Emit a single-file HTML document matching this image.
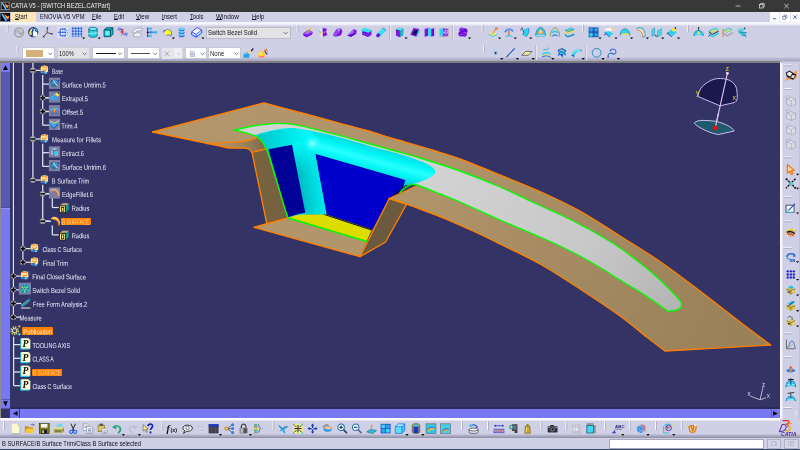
<!DOCTYPE html>
<html><head><meta charset="utf-8"><title>CATIA V5 - [SWITCH BEZEL.CATPart]</title>
<style>
html,body{margin:0;padding:0;}
body{width:800px;height:450px;overflow:hidden;position:relative;background:#cfcfe6;font-family:"Liberation Sans",sans-serif;}
.b{position:absolute;}
.t{position:absolute;white-space:nowrap;line-height:10px;height:10px;transform-origin:0 50%;display:block;}
svg{position:absolute;left:0;top:0;overflow:visible;}
u{text-decoration:underline;text-underline-offset:0px;text-decoration-thickness:0.45px;}
#wrap{position:absolute;left:0;top:0;width:800px;height:450px;will-change:transform;}
</style></head><body><div id="wrap">

<div class="b" style="left:0px;top:0px;width:800px;height:12px;background:#383838;"></div>
<span class="t" style="left:11.3px;top:1.0px;font-size:6.8px;color:#ececec;transform:scaleX(0.846);">CATIA V5 - [SWITCH BEZEL.CATPart]</span>
<div class="b" style="left:0px;top:12px;width:800px;height:10px;background:#cfcfe6;"></div>
<div class="b" style="left:10.7px;top:12.2px;width:25.3px;height:9.6px;background:#ffe6b8;"></div>
<span class="t" style="left:14.6px;top:12.2px;font-size:6.8px;color:#15151f;transform:scaleX(0.857);"><u>S</u>tart</span>
<span class="t" style="left:40.0px;top:12.2px;font-size:6.8px;color:#15151f;transform:scaleX(0.853);">ENOVIA V5 VPM</span>
<span class="t" style="left:91.7px;top:12.2px;font-size:6.8px;color:#15151f;transform:scaleX(0.876);"><u>F</u>ile</span>
<span class="t" style="left:113.6px;top:12.2px;font-size:6.8px;color:#15151f;transform:scaleX(0.853);"><u>E</u>dit</span>
<span class="t" style="left:136.0px;top:12.2px;font-size:6.8px;color:#15151f;transform:scaleX(0.890);"><u>V</u>iew</span>
<span class="t" style="left:162.0px;top:12.2px;font-size:6.8px;color:#15151f;transform:scaleX(0.882);"><u>I</u>nsert</span>
<span class="t" style="left:190.0px;top:12.2px;font-size:6.8px;color:#15151f;transform:scaleX(0.844);"><u>T</u>ools</span>
<span class="t" style="left:216.0px;top:12.2px;font-size:6.8px;color:#15151f;transform:scaleX(0.951);"><u>W</u>indow</span>
<span class="t" style="left:252.0px;top:12.2px;font-size:6.8px;color:#15151f;transform:scaleX(0.887);"><u>H</u>elp</span>
<div class="b" style="left:770.2px;top:12.3px;width:29.8px;height:9.3px;background:#fdfdff;"></div>
<div class="b" style="left:779.3px;top:12.3px;width:0.9px;height:9.3px;background:#e6e6f3;"></div>
<div class="b" style="left:789.8px;top:12.3px;width:0.9px;height:9.3px;background:#e6e6f3;"></div>
<div class="b" style="left:0px;top:22px;width:800px;height:36px;background:#cfcfe6;"></div>
<div class="b" style="left:0px;top:21.6px;width:800px;height:4.4px;background:linear-gradient(#e6e6f3 0%,#f8f8fc 18%,#f6f6fb 50%,#e2e2f1 75%,#d6d6ea 100%);"></div>
<div class="b" style="left:0px;top:57px;width:800px;height:4px;background:linear-gradient(#cbcbe2,#bcbcd4,#aeaec6,#a8a8c0);"></div>
<div class="b" style="left:0px;top:61px;width:779.8px;height:2px;background:#7e7e82;"></div>
<div class="b" style="left:779.8px;top:61px;width:20.2px;height:2px;background:linear-gradient(#b8b8d0,#cfcfe6);"></div>
<div class="b" style="left:0px;top:63px;width:781px;height:355px;background:#333366;"></div>
<div class="b" style="left:0px;top:63px;width:1px;height:355px;background:#8c8c8c;"></div>
<div class="b" style="left:1px;top:63px;width:8.9px;height:346px;background:#5858b4;"></div>
<div class="b" style="left:1px;top:63px;width:8.9px;height:9px;background:#7878f0;"></div>
<div class="b" style="left:1px;top:207px;width:8.9px;height:1px;background:#4a4aa4;"></div>
<div class="b" style="left:1px;top:208px;width:8.9px;height:191.2px;background:#7878f2;"></div>
<div class="b" style="left:1px;top:208px;width:8.9px;height:1.4px;background:#9292f8;"></div>
<div class="b" style="left:1px;top:399.6px;width:8.9px;height:8.9px;background:#7878f0;"></div>
<div class="b" style="left:1px;top:408.5px;width:8.9px;height:9.5px;background:#333366;"></div>
<div class="b" style="left:9.9px;top:408.7px;width:770px;height:9.2px;background:#7878f0;"></div>
<div class="b" style="left:19.4px;top:408.7px;width:0.8px;height:9.2px;background:#3c3c7c;"></div>
<div class="b" style="left:771px;top:408.7px;width:0.7px;height:9.2px;background:#5c5cc0;"></div>
<div class="b" style="left:9.9px;top:407.4px;width:770px;height:1.2px;background:#2b2b5a;"></div>
<div class="b" style="left:779.8px;top:63px;width:20.2px;height:356px;background:#cfcfe6;"></div>
<div class="b" style="left:779.8px;top:63px;width:3.4px;height:356px;background:linear-gradient(90deg,#fafafd 0%,#f6f6fb 60%,#cfcfe6 100%);"></div>
<div class="b" style="left:799px;top:63px;width:1px;height:356px;background:#c0c0d8;"></div>
<div class="b" style="left:0px;top:417.9px;width:779.8px;height:3.2px;background:linear-gradient(#ffffff 0%,#f8f8fc 60%,#dcdcee 100%);"></div>
<div class="b" style="left:0px;top:421px;width:800px;height:13px;background:#cfcfe6;"></div>
<div class="b" style="left:0px;top:433.6px;width:800px;height:4.2px;background:linear-gradient(#c8c8de,#b4b4cc,#a0a0b8,#8c8ca0);"></div>
<div class="b" style="left:0px;top:437.8px;width:800px;height:12.2px;background:#cfcfe6;"></div>
<div class="b" style="left:0px;top:448.8px;width:800px;height:1.2px;background:#2e4e6e;"></div>
<span class="t" style="left:2.0px;top:438.8px;font-size:6.8px;color:#101018;transform:scaleX(0.852);">B SURFACE/B Surface Trim/Class B Surface selected</span>
<div class="b" style="left:608.5px;top:438.7px;width:155.5px;height:10.1px;background:#ffffff;border:0.6px solid #a8a8b8;box-sizing:border-box;"></div>
<div class="b" style="left:767px;top:438.8px;width:14px;height:10px;background:#d6d6ea;border:0.6px solid #b0b0c2;box-sizing:border-box;"></div>
<div class="b" style="left:783.5px;top:438.8px;width:15.5px;height:10px;background:#d6d6ea;border:0.6px solid #b0b0c2;box-sizing:border-box;"></div>
<div class="b" style="left:206px;top:26.8px;width:85.4px;height:12.4px;background:#e3e3e5;border:0.6px solid #bcbcc4;box-sizing:border-box;"></div>
<span class="t" style="left:208.2px;top:28.2px;font-size:6.8px;color:#15151c;transform:scaleX(0.876);">Switch Bezel Solid</span>
<div class="b" style="left:22px;top:47.4px;width:33.4px;height:11.8px;background:#ffffff;border:0.6px solid #c6c6d2;box-sizing:border-box;"></div>
<div class="b" style="left:26px;top:50px;width:17.4px;height:7.4px;background:#d6b27a;"></div>
<div class="b" style="left:57.2px;top:47.4px;width:32.6px;height:11.8px;background:#e3e3e5;border:0.6px solid #cdcdd3;box-sizing:border-box;"></div>
<span class="t" style="left:59.2px;top:48.8px;font-size:6.6px;color:#22222a;transform:scaleX(0.877);">100%</span>
<div class="b" style="left:91.8px;top:47.4px;width:33.4px;height:11.8px;background:#ffffff;border:0.6px solid #c6c6d2;box-sizing:border-box;"></div>
<div class="b" style="left:96px;top:52.7px;width:19.6px;height:1.5px;background:#181818;"></div>
<div class="b" style="left:126.8px;top:47.4px;width:33px;height:11.8px;background:#ffffff;border:0.6px solid #c6c6d2;box-sizing:border-box;"></div>
<div class="b" style="left:130.6px;top:53.4px;width:19.6px;height:0.5px;background:#505050;"></div>
<div class="b" style="left:162px;top:47.4px;width:20.6px;height:11.8px;background:#efeff3;border:0.6px solid #d4d4de;box-sizing:border-box;"></div>
<div class="b" style="left:162.4px;top:47.8px;width:11.6px;height:11px;background:#e6e6ea;"></div>
<div class="b" style="left:185px;top:47.4px;width:22px;height:11.8px;background:#ffffff;border:0.6px solid #c6c6d2;box-sizing:border-box;"></div>
<div class="b" style="left:207.8px;top:47.4px;width:33.4px;height:11.8px;background:#ffffff;border:0.6px solid #c6c6d2;box-sizing:border-box;"></div>
<span class="t" style="left:209.8px;top:48.8px;font-size:6.6px;color:#22222a;transform:scaleX(0.913);">None</span>
<div class="b" style="left:60.8px;top:217.7px;width:30.0px;height:7.7px;background:#ff8000;border-radius:1px;"></div>
<div class="b" style="left:22.1px;top:327.4px;width:31.2px;height:7.7px;background:#ff8000;border-radius:1px;"></div>
<div class="b" style="left:31.8px;top:368.5px;width:30.1px;height:7.7px;background:#ff8000;border-radius:1px;"></div>
<svg width="800" height="450" viewBox="0 0 800 450">
<defs>
<linearGradient id="tanG" gradientUnits="userSpaceOnUse" x1="200" y1="110" x2="720" y2="350"><stop offset="0" stop-color="#b3966c"/><stop offset="0.45" stop-color="#ae9268"/><stop offset="1" stop-color="#9a8159"/></linearGradient>
<linearGradient id="silG" gradientUnits="userSpaceOnUse" x1="420" y1="200" x2="470" y2="150"><stop offset="0" stop-color="#c4c4c4"/><stop offset="0.5" stop-color="#d6d6d6"/><stop offset="1" stop-color="#c0c0c0"/></linearGradient>
<linearGradient id="silG2" gradientUnits="userSpaceOnUse" x1="440" y1="170" x2="680" y2="305"><stop offset="0" stop-color="#d2d2d2"/><stop offset="0.6" stop-color="#c8c8c8"/><stop offset="1" stop-color="#b4b4b4"/></linearGradient>
<linearGradient id="cyV" gradientUnits="userSpaceOnUse" x1="296" y1="180" x2="322" y2="176"><stop offset="0" stop-color="#00b4bc"/><stop offset="0.5" stop-color="#00d4d8"/><stop offset="1" stop-color="#00ecee"/></linearGradient>
<linearGradient id="cyVt" gradientUnits="userSpaceOnUse" x1="300" y1="143" x2="304" y2="172"><stop offset="0" stop-color="#00f6f6" stop-opacity="1"/><stop offset="0.3" stop-color="#00f2f2" stop-opacity="0.8"/><stop offset="1" stop-color="#00e8e8" stop-opacity="0"/></linearGradient>
<linearGradient id="cyL" gradientUnits="userSpaceOnUse" x1="256" y1="140" x2="304" y2="134"><stop offset="0" stop-color="#00c4c8"/><stop offset="0.5" stop-color="#00dcdf"/><stop offset="1" stop-color="#00f6f6"/></linearGradient>
<linearGradient id="cyH" gradientUnits="userSpaceOnUse" x1="372" y1="145" x2="365" y2="171"><stop offset="0" stop-color="#00d8dc"/><stop offset="0.3" stop-color="#00f4f6"/><stop offset="0.55" stop-color="#28ffff"/><stop offset="0.8" stop-color="#00f4f4"/><stop offset="1" stop-color="#00d8dc"/></linearGradient>
<radialGradient id="cyR" gradientUnits="userSpaceOnUse" cx="312.5" cy="143.6" r="9"><stop offset="0" stop-color="#9affff"/><stop offset="0.4" stop-color="#50ffff" stop-opacity="0.7"/><stop offset="1" stop-color="#20ffff" stop-opacity="0"/></radialGradient>
<linearGradient id="filS" gradientUnits="userSpaceOnUse" x1="212" y1="146" x2="262" y2="142"><stop offset="0" stop-color="#9c825a" stop-opacity="0"/><stop offset="0.55" stop-color="#8e7650" stop-opacity="0.5"/><stop offset="1" stop-color="#7c6846" stop-opacity="0.9"/></linearGradient>
</defs>
<path d="M152.5,132 L264,102.8 C270.0,104.4 287.3,109.1 300.0,112.5 C312.7,115.9 328.9,120.3 340.0,123.3 C351.1,126.3 357.0,127.7 366.7,130.5 C376.4,133.3 387.1,136.8 398.0,140.0 C408.9,143.2 421.7,146.8 432.0,150.0 C442.3,153.2 448.7,154.8 460.0,159.0 C471.3,163.2 486.7,169.6 500.0,175.0 C513.3,180.4 526.7,185.5 540.0,191.5 C553.3,197.5 566.7,203.6 580.0,211.0 C593.3,218.4 606.7,227.6 620.0,236.0 C633.3,244.4 646.7,252.3 660.0,261.5 C673.3,270.7 686.7,280.9 700.0,291.0 C713.3,301.1 728.2,313.0 740.0,322.0 C751.8,331.0 765.5,341.2 770.6,345.0 L665,351 C662.2,348.8 655.5,343.8 648.0,338.0 C640.5,332.2 631.3,324.2 620.0,316.0 C608.7,307.8 593.3,297.7 580.0,289.0 C566.7,280.3 553.3,271.5 540.0,264.0 C526.7,256.5 511.2,249.5 500.0,244.0 C488.8,238.5 481.9,235.1 473.0,231.0 C464.1,226.9 455.5,223.0 446.7,219.3 C437.9,215.6 429.6,212.5 420.0,209.0 C410.4,205.5 394.4,200.2 389.3,198.5 L417.3,185.5 L405,180 L300,150 L268,152.7 L265.6,149 L252,152.3 C250.4,149.6 248,148.3 244,148.2 L231,148 C227,148 224,147 220,146 Z" fill="url(#tanG)"/>
<path d="M208,143.7 L238,141.9 C247,141.2 253,139.6 257.6,137.3 L262.7,142 L265.6,149 L252,152.3 C250.4,149.6 248,148.3 244,148.2 L231,148 C227,148 224,147 220,146 Z" fill="url(#filS)"/>
<path d="M252,152.3 L265.6,149 L268,152.7 L285.3,210 L288,218 L266.7,223.3 Z" fill="#76623f"/>
<path d="M253.9,227.3 L288,218 L366.7,241.5 L360,256.7 Z" fill="#b2966b"/>
<path d="M389.3,198.5 L406.7,204 L385.6,242 L360,256.7 Z" fill="#6c5a3e"/>
<path d="M234.7,130 C237.2,129.4 245.1,127.4 250.0,126.5 C254.9,125.6 259.2,125.1 264.0,124.6 C268.8,124.1 273.6,123.4 278.7,123.4 C283.8,123.4 288.9,123.8 294.7,124.7 C300.5,125.6 305.8,127.0 313.3,128.8 C320.9,130.6 330.6,133.1 340.0,135.6 C349.4,138.1 361.1,141.5 370.0,144.0 C378.9,146.5 385.0,148.2 393.3,150.5 C401.6,152.8 408.9,154.6 420.0,158.0 C431.1,161.4 446.7,166.2 460.0,171.0 C473.3,175.8 486.7,181.2 500.0,187.0 C513.3,192.8 530.0,200.9 540.0,205.5 C550.0,210.1 553.3,211.3 560.0,214.5 C566.7,217.7 573.3,221.0 580.0,224.5 C586.7,228.0 593.3,231.6 600.0,235.5 C606.7,239.4 613.3,243.4 620.0,248.0 C626.7,252.6 633.3,257.7 640.0,263.0 C646.7,268.3 654.0,274.5 660.0,280.0 C666.0,285.5 672.4,292.2 676.0,296.0 C679.6,299.8 680.6,301.8 681.5,303.0 C681.3,303.8 681.6,306.8 680.5,308.0 C679.4,309.2 677.1,310.0 675.0,310.5 C672.9,311.0 669.2,311.1 668.0,311.2 C665.3,309.3 656.7,303.2 652.0,300.0 C647.3,296.8 645.3,295.3 640.0,292.0 C634.7,288.7 626.7,284.1 620.0,280.0 C613.3,275.9 606.7,271.5 600.0,267.5 C593.3,263.5 586.7,259.6 580.0,256.0 C573.3,252.4 566.7,249.2 560.0,246.0 C553.3,242.8 550.0,241.3 540.0,237.0 C530.0,232.7 513.3,225.8 500.0,220.0 C486.7,214.2 470.0,206.3 460.0,202.0 C450.0,197.7 446.7,196.7 440.0,194.0 C433.3,191.3 424.5,187.6 420.0,186.0 C415.5,184.4 414.2,184.6 413.0,184.3 L405,184.8 L400,178 L300,140 L254.7,135.6 Z" fill="url(#silG2)"/>
<path d="M254.7,135.6 C256.2,135.0 260.9,133.1 264.0,132.2 C267.1,131.3 269.7,130.8 273.0,130.2 C276.3,129.6 280.4,128.9 284.0,128.6 C287.6,128.3 290.2,127.8 294.7,128.2 C299.1,128.6 304.8,129.7 310.7,130.8 C316.6,131.9 323.4,133.4 330.0,135.0 C336.6,136.6 343.3,138.4 350.0,140.3 C356.7,142.2 362.2,144.0 370.0,146.2 C377.8,148.4 388.7,151.0 396.7,153.3 C404.7,155.6 412.8,158.3 418.0,160.2 C423.2,162.0 425.4,163.0 428.0,164.4 C430.6,165.8 432.4,167.1 433.6,168.4 C434.8,169.7 435.5,170.7 435.3,172.0 C435.1,173.3 434.5,174.6 432.6,176.0 C430.7,177.4 427.1,178.9 424.0,180.2 C420.9,181.5 417.1,183.0 414.0,183.8 C410.9,184.6 406.8,184.8 405.3,185.0 L402.7,187.3 L405.3,179.9 L315.5,154 L326.7,214.5 L322.7,214.8 L304,214.8 L288,218 L285.3,210 L268,152.7 C266,147 262,140 254.7,135.6 Z" fill="url(#cyH)"/>
<path d="M254.7,135.6 C264,132.2 275,129.4 294.7,128.2 L312,131.2 L318,150 L292,144.7 L268,148.7 L268,152.7 C266,147 262,140 254.7,135.6 Z" fill="url(#cyL)"/>
<path d="M291.4,144.9 C296,138 310,136 315.5,154 L326.7,214.5 L322.7,214.8 L310.7,214 L305.3,212.7 Z" fill="url(#cyV)"/>
<path d="M291.4,144.9 C296,138 310,136 315.5,154 L326.7,214.5 L322.7,214.8 L310.7,214 L305.3,212.7 Z" fill="url(#cyVt)"/>
<ellipse cx="312.5" cy="143.6" rx="10" ry="8" fill="url(#cyR)"/>
<path d="M268.3,149.2 L292,144.7 L305.3,212.7 C300,213.5 294,215 288.5,217.3 L285.6,210 Z" fill="#000096"/>
<path d="M315.5,154 L405.3,179.9 L402.7,187.3 L389.3,198.5 L372,229.6 L326.7,214.6 Z" fill="#0000cd"/>
<path d="M405.3,180.5 L402.9,187.5 L392,196.5 L400,192 C401,188 403,185 405.3,180.5 Z" fill="#00002a"/>
<path d="M288.5,217.6 C296,215.2 300,214.6 305,214.6 L322.7,214.6 L326.7,214.8 L372,229.4 L366.7,241 Z" fill="#dcdc00"/>
<path d="M322.7,214.6 L326.7,214.8 L372,229.4 L371.3,230.6 Z" fill="#202000"/>
<path d="M152.5,132 L264,102.8 C270.0,104.4 287.3,109.1 300.0,112.5 C312.7,115.9 328.9,120.3 340.0,123.3 C351.1,126.3 357.0,127.7 366.7,130.5 C376.4,133.3 387.1,136.8 398.0,140.0 C408.9,143.2 421.7,146.8 432.0,150.0 C442.3,153.2 448.7,154.8 460.0,159.0 C471.3,163.2 486.7,169.6 500.0,175.0 C513.3,180.4 526.7,185.5 540.0,191.5 C553.3,197.5 566.7,203.6 580.0,211.0 C593.3,218.4 606.7,227.6 620.0,236.0 C633.3,244.4 646.7,252.3 660.0,261.5 C673.3,270.7 686.7,280.9 700.0,291.0 C713.3,301.1 728.2,313.0 740.0,322.0 C751.8,331.0 765.5,341.2 770.6,345.0 L665,351 C662.2,348.8 655.5,343.8 648.0,338.0 C640.5,332.2 631.3,324.2 620.0,316.0 C608.7,307.8 593.3,297.7 580.0,289.0 C566.7,280.3 553.3,271.5 540.0,264.0 C526.7,256.5 511.2,249.5 500.0,244.0 C488.8,238.5 481.9,235.1 473.0,231.0 C464.1,226.9 455.5,223.0 446.7,219.3 C437.9,215.6 429.6,212.5 420.0,209.0 C410.4,205.5 394.4,200.2 389.3,198.5" fill="none" stroke="#ff8000" stroke-width="1.35" stroke-linejoin="round" stroke-linecap="round"/>
<path d="M389.3,198.5 L417.3,185.5" fill="none" stroke="#ff8000" stroke-width="1.35" stroke-linejoin="round" stroke-linecap="round"/>
<path d="M152.5,132 L220,146 C224,147 227,148 231,148 L244,148.2 C248,148.3 250.4,149.6 252,152.3 L266.7,223.3" fill="none" stroke="#ff8000" stroke-width="1.35" stroke-linejoin="round" stroke-linecap="round"/>
<path d="M252,152.3 L265.6,149" fill="none" stroke="#ff8000" stroke-width="1.35" stroke-linejoin="round" stroke-linecap="round"/>
<path d="M208,143.7 L238,141.9 C247,141.2 253,139.6 257.6,137.3" fill="none" stroke="#ff8000" stroke-width="1.35" stroke-linejoin="round" stroke-linecap="round"/>
<path d="M288,218 L253.9,227.3 L360,256.7 L389.3,198.5" fill="none" stroke="#ff8000" stroke-width="1.35" stroke-linejoin="round" stroke-linecap="round"/>
<path d="M389.3,198.5 L406.7,204 L385.6,242 L360,256.7" fill="none" stroke="#ff8000" stroke-width="1.35" stroke-linejoin="round" stroke-linecap="round"/>
<path d="M234.7,130 C237.2,129.4 245.1,127.4 250.0,126.5 C254.9,125.6 259.2,125.1 264.0,124.6 C268.8,124.1 273.6,123.4 278.7,123.4 C283.8,123.4 288.9,123.8 294.7,124.7 C300.5,125.6 305.8,127.0 313.3,128.8 C320.9,130.6 330.6,133.1 340.0,135.6 C349.4,138.1 361.1,141.5 370.0,144.0 C378.9,146.5 385.0,148.2 393.3,150.5 C401.6,152.8 408.9,154.6 420.0,158.0 C431.1,161.4 446.7,166.2 460.0,171.0 C473.3,175.8 486.7,181.2 500.0,187.0 C513.3,192.8 530.0,200.9 540.0,205.5 C550.0,210.1 553.3,211.3 560.0,214.5 C566.7,217.7 573.3,221.0 580.0,224.5 C586.7,228.0 593.3,231.6 600.0,235.5 C606.7,239.4 613.3,243.4 620.0,248.0 C626.7,252.6 633.3,257.7 640.0,263.0 C646.7,268.3 654.0,274.5 660.0,280.0 C666.0,285.5 672.4,292.2 676.0,296.0 C679.6,299.8 680.6,301.8 681.5,303.0 C681.3,303.8 681.6,306.8 680.5,308.0 C679.4,309.2 677.1,310.0 675.0,310.5 C672.9,311.0 669.2,311.1 668.0,311.2" fill="none" stroke="#00ff00" stroke-width="1.35" stroke-linejoin="round" stroke-linecap="round"/>
<path d="M400,192.5 C404,188 408,185 413,184.3 C414.2,184.6 415.5,184.4 420.0,186.0 C424.5,187.6 433.3,191.3 440.0,194.0 C446.7,196.7 450.0,197.7 460.0,202.0 C470.0,206.3 486.7,214.2 500.0,220.0 C513.3,225.8 530.0,232.7 540.0,237.0 C550.0,241.3 553.3,242.8 560.0,246.0 C566.7,249.2 573.3,252.4 580.0,256.0 C586.7,259.6 593.3,263.5 600.0,267.5 C606.7,271.5 613.3,275.9 620.0,280.0 C626.7,284.1 634.7,288.7 640.0,292.0 C645.3,295.3 647.3,296.8 652.0,300.0 C656.7,303.2 665.3,309.3 668.0,311.2" fill="none" stroke="#00ff00" stroke-width="1.35" stroke-linejoin="round" stroke-linecap="round"/>
<path d="M234.7,130 C236.6,130.5 242.7,132.1 246.0,133.0 C249.3,133.9 252.4,134.6 254.7,135.6 C257.0,136.6 258.4,137.5 260.0,139.0 C261.6,140.5 262.7,142.2 264.0,144.5 C265.3,146.8 267.3,151.3 268.0,152.7 L285.3,210 L288,218 L366.7,241.5" fill="none" stroke="#00ff00" stroke-width="1.35" stroke-linejoin="round" stroke-linecap="round"/>
<path d="M697.8,96.4 C699,90 702,85.6 706.6,83 C710,80.6 713.6,79 717.3,78.6 C722,78.2 726,78.8 729.7,80.4 C733.4,82.4 735.6,85 736.5,88.4 C737.2,91.6 737.4,95 737.2,98.2 C737,100.6 736,102 734.2,102.6 L720,105.8 Z" fill="#191950"/>
<path d="M697.8,96.4 C699,90 702,85.6 706.6,83 C710,80.6 713.6,79 717.3,78.6 C722,78.2 726,78.8 729.7,80.4 C733.4,82.4 735.6,85 736.5,88.4 C737.2,91.6 737.4,95 737.2,98.2 C737,100.6 736,102 734.2,102.6 L720,105.8 Z" fill="none" stroke="#dcc8f4" stroke-width="0.9"/>
<path d="M727.4,73.3 L715.5,126.6" stroke="#dcc8f4" stroke-width="1.1"/>
<circle cx="727.4" cy="73.3" r="1.4" fill="#f0e8ff"/>
<path d="M694.2,123 C696,121 699,120.4 703,120.4 C707,120.4 711,120.6 715.5,121.3 C720,122.2 724.4,123.8 728,125.7 C731,127.4 733.6,129.4 734.2,131 L718.2,134.6 C712,133.4 706,131 701.3,128.4 C698,126.6 695.4,124.8 694.2,123 Z" fill="#1f5a6e"/>
<path d="M694.2,123 C696,121 699,120.4 703,120.4 C707,120.4 711,120.6 715.5,121.3 C720,122.2 724.4,123.8 728,125.7 C731,127.4 733.6,129.4 734.2,131 L718.2,134.6 C712,133.4 706,131 701.3,128.4 C698,126.6 695.4,124.8 694.2,123 Z" fill="none" stroke="#dcc8f4" stroke-width="0.9"/>
<path d="M718.6,112.6 L715.5,126.6" stroke="#dcc8f4" stroke-width="1.1"/>
<rect x="712.9" y="125.7" width="4.2" height="4.4" fill="#e01010"/>
<text x="725.6" y="70.6" font-family="Liberation Sans,sans-serif" font-size="7" fill="#e8d838">z</text>
<text x="696" y="94.6" font-family="Liberation Sans,sans-serif" font-size="7" fill="#e8d838">y</text>
<text x="732.4" y="99.8" font-family="Liberation Sans,sans-serif" font-size="7" fill="#e8d838">x</text>
<path d="M760,399.8 L763,387.2 M760,399.8 L750.6,396.2 M760,399.8 L766,397.8" stroke="#d4d4ec" stroke-width="0.8" fill="none"/>
<text x="762" y="386.6" font-family="Liberation Sans,sans-serif" font-size="6.4" fill="#d4d4ec">z</text>
<text x="747.4" y="396" font-family="Liberation Sans,sans-serif" font-size="6.4" fill="#d4d4ec">x</text>
<text x="766.8" y="398.4" font-family="Liberation Sans,sans-serif" font-size="6.4" fill="#d4d4ec">x</text>
<path d="M12.4,63 L12.4,315.4" stroke="#23235a" stroke-width="0.9" fill="none"/>
<path d="M13.4,63 L13.4,318.4" stroke="#e2e2f6" stroke-width="1.25" fill="none"/>
<path d="M21.9,63 L21.9,260.5" stroke="#23235a" stroke-width="0.9" fill="none"/>
<path d="M22.9,63 L22.9,263.5" stroke="#e2e2f6" stroke-width="1.25" fill="none"/>
<path d="M31.9,63 L31.9,178.3" stroke="#23235a" stroke-width="0.9" fill="none"/>
<path d="M32.9,63 L32.9,181.3" stroke="#e2e2f6" stroke-width="1.25" fill="none"/>
<path d="M32.9,70.4 L40.3,70.4" stroke="#e2e2f6" stroke-width="1.25" fill="none"/>
<path d="M42.7,97.8 L49.7,97.8" stroke="#e2e2f6" stroke-width="1.25" fill="none"/>
<path d="M42.7,111.5 L49.7,111.5" stroke="#e2e2f6" stroke-width="1.25" fill="none"/>
<path d="M32.9,139.0 L40.3,139.0" stroke="#e2e2f6" stroke-width="1.25" fill="none"/>
<path d="M32.9,180.1 L40.3,180.1" stroke="#e2e2f6" stroke-width="1.25" fill="none"/>
<path d="M42.7,193.8 L49.7,193.8" stroke="#e2e2f6" stroke-width="1.25" fill="none"/>
<path d="M42.7,221.2 L51.0,221.2" stroke="#e2e2f6" stroke-width="1.25" fill="none"/>
<path d="M22.9,248.6 L30.4,248.6" stroke="#e2e2f6" stroke-width="1.25" fill="none"/>
<path d="M22.9,262.3 L30.4,262.3" stroke="#e2e2f6" stroke-width="1.25" fill="none"/>
<path d="M13.4,276.1 L20.6,276.1" stroke="#e2e2f6" stroke-width="1.25" fill="none"/>
<path d="M13.4,289.8 L20.6,289.8" stroke="#e2e2f6" stroke-width="1.25" fill="none"/>
<path d="M13.4,303.5 L21.3,303.5" stroke="#e2e2f6" stroke-width="1.25" fill="none"/>
<path d="M13.4,317.2 L20.2,317.2" stroke="#e2e2f6" stroke-width="1.25" fill="none"/>
<path d="M42.7,75.1 L42.7,125.2" stroke="#e2e2f6" stroke-width="1.25" fill="none"/>
<path d="M42.7,84.1 L49.5,84.1" stroke="#e2e2f6" stroke-width="1.25" fill="none"/>
<path d="M42.7,97.8 L49.5,97.8" stroke="#e2e2f6" stroke-width="1.25" fill="none"/>
<path d="M42.7,111.5 L49.5,111.5" stroke="#e2e2f6" stroke-width="1.25" fill="none"/>
<path d="M42.7,125.2 L49.5,125.2" stroke="#e2e2f6" stroke-width="1.25" fill="none"/>
<path d="M42.7,143.7 L42.7,166.4" stroke="#e2e2f6" stroke-width="1.25" fill="none"/>
<path d="M42.7,152.7 L49.5,152.7" stroke="#e2e2f6" stroke-width="1.25" fill="none"/>
<path d="M42.7,166.4 L49.5,166.4" stroke="#e2e2f6" stroke-width="1.25" fill="none"/>
<path d="M42.7,184.8 L42.7,221.2" stroke="#e2e2f6" stroke-width="1.25" fill="none"/>
<path d="M42.7,193.8 L49.5,193.8" stroke="#e2e2f6" stroke-width="1.25" fill="none"/>
<path d="M42.7,221.2 L49.5,221.2" stroke="#e2e2f6" stroke-width="1.25" fill="none"/>
<path d="M52.3,198.0 L52.3,207.5" stroke="#e2e2f6" stroke-width="1.25" fill="none"/>
<path d="M52.3,207.5 L58.8,207.5" stroke="#e2e2f6" stroke-width="1.25" fill="none"/>
<path d="M52.3,225.4 L52.3,234.9" stroke="#e2e2f6" stroke-width="1.25" fill="none"/>
<path d="M52.3,234.9 L58.8,234.9" stroke="#e2e2f6" stroke-width="1.25" fill="none"/>
<path d="M13.6,336.6 L13.6,385.7" stroke="#e2e2f6" stroke-width="1.25" fill="none"/>
<path d="M13.6,344.6 L20.8,344.6" stroke="#e2e2f6" stroke-width="1.25" fill="none"/>
<path d="M13.6,358.3 L20.8,358.3" stroke="#e2e2f6" stroke-width="1.25" fill="none"/>
<path d="M13.6,372.0 L20.8,372.0" stroke="#e2e2f6" stroke-width="1.25" fill="none"/>
<path d="M13.6,385.7 L20.8,385.7" stroke="#e2e2f6" stroke-width="1.25" fill="none"/>
<g transform="translate(39.5,65.0)"><path d="M1.6,1.6 C3.4,0.2 6.6,0.4 8.2,1.2 C8.8,3 8.8,5.6 8.2,7.6 C6.4,8.8 3.4,8.8 1.4,7.8 C0.8,5.8 0.8,3.4 1.6,1.6 Z" fill="#ffe68a"/><path d="M2.4,2 C3.6,1.4 4.6,1.6 5,2.6 M5.6,1.8 C6.6,1.6 7.4,2 7.6,3 M2.8,4.4 C4,5.6 6,5.6 7.2,4.2" fill="none" stroke="#ee5a1c" stroke-width="0.9"/><path d="M1.2,6.6 C3,5.4 5,6.4 6.4,7 C7.6,7.4 8.8,7 9.8,6 C9.4,8 7.8,9.2 5.8,9.2 C4,9.2 2.2,8.4 1.2,6.6 Z" fill="#165fbe"/><path d="M2.4,7.4 C4,6.8 5.6,7.8 7.4,7.8" fill="none" stroke="#38b8f0" stroke-width="0.7"/><path d="M9.4,0.4 C10.8,1.6 11,3.2 10,4.6 C10,3 9.8,1.8 9.4,0.4 Z" fill="#1c6cd0"/><path d="M4.6,7.8 L6.4,8.8 L7.6,7.6" fill="#ffe68a"/></g>
<circle cx="32.9" cy="70.4" r="2.9" fill="#8e8e96"/><circle cx="32.6" cy="70.0" r="2" fill="#bcbcc2"/><rect x="30.599999999999998" y="69.65" width="4.6" height="1.5" fill="#060608"/>
<g transform="translate(48.9,77.7)"><rect x="0" y="0" width="11.2" height="11.2" fill="#7e7ea0"/><path d="M1.6,3.4 C3.6,1 8,1.2 9.8,3.8 C10.2,7 7.4,10 4.2,9.8 C1.8,8.8 1,5.6 1.6,3.4 Z" fill="#4a78a8"/><path d="M2.4,6.6 C3.4,9 6.4,9.6 8.4,8 C7,8.4 4.4,8 3.6,6 Z" fill="#0c7ea0"/><path d="M4.6,2.6 L6.4,5.6 L8.6,8.2" fill="none" stroke="#e8eef8" stroke-width="1"/><path d="M1.6,2 L3,3.6 M8.8,2.4 L9.8,4" stroke="#2038c8" stroke-width="1.2"/><path d="M3.4,5.6 C4.4,4.4 5.4,4.6 5.8,6 M6.8,3.4 C7.6,3.6 8,4.4 7.6,5.2" fill="none" stroke="#30d0f0" stroke-width="0.9"/><path d="M1.2,2.6 L2.6,1.6" stroke="#e8d850" stroke-width="0.7"/></g>
<g transform="translate(48.9,91.4)"><rect x="0" y="0" width="11.2" height="11.2" fill="#7e7ea0"/><path d="M1.4,7.4 L5.6,3.2 L9.4,5.4 L6,9.8 Z" fill="#3aa0f0"/><path d="M5.6,3.2 L8.2,1.4 L10.2,3 L9.4,5.4 Z" fill="#ffe040"/><path d="M1.4,7.4 L5.6,3.2" stroke="#30e0f8" stroke-width="0.9"/><circle cx="9.6" cy="1.6" r="0.7" fill="#202020"/></g>
<circle cx="42.7" cy="97.8" r="2.9" fill="#8e8e96"/><circle cx="42.400000000000006" cy="97.4" r="2" fill="#bcbcc2"/><rect x="40.400000000000006" y="97.07" width="4.6" height="1.5" fill="#060608"/><rect x="41.95" y="95.52" width="1.5" height="4.6" fill="#060608"/>
<g transform="translate(48.9,105.1)"><rect x="0" y="0" width="11.2" height="11.2" fill="#7e7ea0"/><path d="M1.2,4.6 C3.6,1.6 7.6,1.6 10,4.4 L8.8,5.6 C7,3.6 4.2,3.6 2.4,5.6 Z" fill="#36b0f4"/><path d="M1.6,8.8 C4,6.2 7.4,6.2 9.8,8.8 L8.6,10.2 C7,8.4 4.4,8.4 2.8,10.2 Z" fill="#2a7ad8"/><path d="M5.6,3.4 L5.6,8.4" stroke="#ff7020" stroke-width="1.3"/><path d="M4.2,5.4 L5.6,3.2 L7,5.4 Z" fill="#ffb020"/></g>
<circle cx="42.7" cy="111.5" r="2.9" fill="#8e8e96"/><circle cx="42.400000000000006" cy="111.1" r="2" fill="#bcbcc2"/><rect x="40.400000000000006" y="110.78" width="4.6" height="1.5" fill="#060608"/><rect x="41.95" y="109.23" width="1.5" height="4.6" fill="#060608"/>
<g transform="translate(48.9,118.8)"><rect x="0" y="0" width="11.2" height="11.2" fill="#7e7ea0"/><path d="M1,2.2 L6,4.4 L10.2,1.6 L9.6,4.4 L5.4,9.6 L1.6,6.6 Z" fill="#38a8f0"/><path d="M1,2.2 L6,4.4 L10.2,1.6" fill="none" stroke="#ffe060" stroke-width="0.9"/><path d="M2,7 L5.4,9.6 L9,5" fill="none" stroke="#2048b0" stroke-width="0.8"/><circle cx="9.8" cy="9.6" r="0.9" fill="#b0b0b8"/></g>
<g transform="translate(39.5,133.6)"><path d="M1.6,1.6 C3.4,0.2 6.6,0.4 8.2,1.2 C8.8,3 8.8,5.6 8.2,7.6 C6.4,8.8 3.4,8.8 1.4,7.8 C0.8,5.8 0.8,3.4 1.6,1.6 Z" fill="#ffe68a"/><path d="M2.4,2 C3.6,1.4 4.6,1.6 5,2.6 M5.6,1.8 C6.6,1.6 7.4,2 7.6,3 M2.8,4.4 C4,5.6 6,5.6 7.2,4.2" fill="none" stroke="#ee5a1c" stroke-width="0.9"/><path d="M1.2,6.6 C3,5.4 5,6.4 6.4,7 C7.6,7.4 8.8,7 9.8,6 C9.4,8 7.8,9.2 5.8,9.2 C4,9.2 2.2,8.4 1.2,6.6 Z" fill="#165fbe"/><path d="M2.4,7.4 C4,6.8 5.6,7.8 7.4,7.8" fill="none" stroke="#38b8f0" stroke-width="0.7"/><path d="M9.4,0.4 C10.8,1.6 11,3.2 10,4.6 C10,3 9.8,1.8 9.4,0.4 Z" fill="#1c6cd0"/><path d="M4.6,7.8 L6.4,8.8 L7.6,7.6" fill="#ffe68a"/></g>
<circle cx="32.9" cy="139.0" r="2.9" fill="#8e8e96"/><circle cx="32.6" cy="138.6" r="2" fill="#bcbcc2"/><rect x="30.599999999999998" y="138.20" width="4.6" height="1.5" fill="#060608"/>
<g transform="translate(48.9,146.3)"><rect x="0" y="0" width="11.2" height="11.2" fill="#7e7ea0"/><path d="M2,2.6 L6.6,1.4 L9.4,3.6 L9.4,8.6 L5,10 L2,7.6 Z" fill="#a4b2c8"/><path d="M2,2.6 L5,4.8 L5,10 M5,4.8 L9.4,3.6" fill="none" stroke="#18306a" stroke-width="0.7"/><path d="M5.4,5.4 L8.8,4.4 L8.8,8.2 L5.4,9.2 Z" fill="#34d0f0"/><path d="M2.2,1.8 L4.2,3.4" stroke="#30e0f8" stroke-width="1"/></g>
<g transform="translate(48.9,160.0)"><rect x="0" y="0" width="11.2" height="11.2" fill="#7e7ea0"/><path d="M1.6,3.4 C3.6,1 8,1.2 9.8,3.8 C10.2,7 7.4,10 4.2,9.8 C1.8,8.8 1,5.6 1.6,3.4 Z" fill="#4a78a8"/><path d="M2.4,6.6 C3.4,9 6.4,9.6 8.4,8 C7,8.4 4.4,8 3.6,6 Z" fill="#0c7ea0"/><path d="M4.6,2.6 L6.4,5.6 L8.6,8.2" fill="none" stroke="#e8eef8" stroke-width="1"/><path d="M1.6,2 L3,3.6 M8.8,2.4 L9.8,4" stroke="#2038c8" stroke-width="1.2"/><path d="M3.4,5.6 C4.4,4.4 5.4,4.6 5.8,6 M6.8,3.4 C7.6,3.6 8,4.4 7.6,5.2" fill="none" stroke="#30d0f0" stroke-width="0.9"/><path d="M1.2,2.6 L2.6,1.6" stroke="#e8d850" stroke-width="0.7"/></g>
<g transform="translate(39.5,174.7)"><path d="M1.6,1.6 C3.4,0.2 6.6,0.4 8.2,1.2 C8.8,3 8.8,5.6 8.2,7.6 C6.4,8.8 3.4,8.8 1.4,7.8 C0.8,5.8 0.8,3.4 1.6,1.6 Z" fill="#ffe68a"/><path d="M2.4,2 C3.6,1.4 4.6,1.6 5,2.6 M5.6,1.8 C6.6,1.6 7.4,2 7.6,3 M2.8,4.4 C4,5.6 6,5.6 7.2,4.2" fill="none" stroke="#ee5a1c" stroke-width="0.9"/><path d="M1.2,6.6 C3,5.4 5,6.4 6.4,7 C7.6,7.4 8.8,7 9.8,6 C9.4,8 7.8,9.2 5.8,9.2 C4,9.2 2.2,8.4 1.2,6.6 Z" fill="#165fbe"/><path d="M2.4,7.4 C4,6.8 5.6,7.8 7.4,7.8" fill="none" stroke="#38b8f0" stroke-width="0.7"/><path d="M9.4,0.4 C10.8,1.6 11,3.2 10,4.6 C10,3 9.8,1.8 9.4,0.4 Z" fill="#1c6cd0"/><path d="M4.6,7.8 L6.4,8.8 L7.6,7.6" fill="#ffe68a"/></g>
<circle cx="32.9" cy="180.1" r="2.9" fill="#8e8e96"/><circle cx="32.6" cy="179.7" r="2" fill="#bcbcc2"/><rect x="30.599999999999998" y="179.33" width="4.6" height="1.5" fill="#060608"/>
<g transform="translate(48.9,187.4)"><rect x="0" y="0" width="11.2" height="11.2" fill="#7e7ea0"/><path d="M1.4,2.6 L5.6,1.6 C8.6,2 10,4.4 9.8,8.6 L8.4,9.6 C8.4,6 7.4,3.8 4.6,3.6 L1.8,4 Z" fill="#c9a27a"/><path d="M4.6,3.6 C7.4,3.8 8.4,6 8.4,9.6" fill="none" stroke="#e84820" stroke-width="0.9"/><path d="M1.4,2.6 L5.6,1.6 C8.6,2 10,4.4 9.8,8.6" fill="none" stroke="#e8d8c0" stroke-width="0.6"/></g>
<circle cx="42.7" cy="193.8" r="2.9" fill="#8e8e96"/><circle cx="42.400000000000006" cy="193.4" r="2" fill="#bcbcc2"/><rect x="40.400000000000006" y="193.04" width="4.6" height="1.5" fill="#060608"/>
<g transform="translate(58.2,202.3)"><path d="M1.2,3.6 L4.4,1 L10.4,1 L10.4,7.4 L7.4,10.4 L1.2,10.4 Z" fill="#1e9a94"/><path d="M1.2,3.6 L4.4,1 L10.4,1 L7.4,3.6 Z" fill="#c8a074"/><rect x="1.2" y="3.6" width="6.2" height="6.8" fill="#fff088"/><rect x="1.2" y="3.6" width="6.2" height="6.8" fill="none" stroke="#1a1a10" stroke-width="0.9"/><rect x="3.2" y="5.2" width="2.4" height="3.8" fill="none" stroke="#1a1a10" stroke-width="0.8"/><path d="M4.4,7 L4.4,7.2" stroke="#1a1a10" stroke-width="0.8"/></g>
<g transform="translate(50.2,215.8)"><path d="M0.6,2.6 C3.4,-0.4 8.4,1 9.6,5.4 C10.2,7.6 9.4,9.4 8.4,10 C8.6,6.6 7,4 3.6,3.6 C2.4,3.5 1.4,3.4 0.6,2.6 Z" fill="#ffb43c"/><path d="M1.4,2.4 C4,0.8 7.6,1.8 8.8,5 C8,3.4 5.6,2.2 3.4,2.6 Z" fill="#ffe9a0"/><path d="M8.4,10 C8.6,6.6 7,4 3.6,3.6" fill="none" stroke="#e86a10" stroke-width="0.7"/></g>
<circle cx="42.7" cy="221.2" r="2.9" fill="#8e8e96"/><circle cx="42.400000000000006" cy="220.8" r="2" fill="#bcbcc2"/><rect x="40.400000000000006" y="220.46" width="4.6" height="1.5" fill="#060608"/>
<g transform="translate(58.2,229.7)"><path d="M1.2,3.6 L4.4,1 L10.4,1 L10.4,7.4 L7.4,10.4 L1.2,10.4 Z" fill="#1e9a94"/><path d="M1.2,3.6 L4.4,1 L10.4,1 L7.4,3.6 Z" fill="#c8a074"/><rect x="1.2" y="3.6" width="6.2" height="6.8" fill="#fff088"/><rect x="1.2" y="3.6" width="6.2" height="6.8" fill="none" stroke="#1a1a10" stroke-width="0.9"/><rect x="3.2" y="5.2" width="2.4" height="3.8" fill="none" stroke="#1a1a10" stroke-width="0.8"/><path d="M4.4,7 L4.4,7.2" stroke="#1a1a10" stroke-width="0.8"/></g>
<g transform="translate(29.6,243.2)"><path d="M1.6,1.6 C3.4,0.2 6.6,0.4 8.2,1.2 C8.8,3 8.8,5.6 8.2,7.6 C6.4,8.8 3.4,8.8 1.4,7.8 C0.8,5.8 0.8,3.4 1.6,1.6 Z" fill="#ffe68a"/><path d="M2.4,2 C3.6,1.4 4.6,1.6 5,2.6 M5.6,1.8 C6.6,1.6 7.4,2 7.6,3 M2.8,4.4 C4,5.6 6,5.6 7.2,4.2" fill="none" stroke="#ee5a1c" stroke-width="0.9"/><path d="M1.2,6.6 C3,5.4 5,6.4 6.4,7 C7.6,7.4 8.8,7 9.8,6 C9.4,8 7.8,9.2 5.8,9.2 C4,9.2 2.2,8.4 1.2,6.6 Z" fill="#165fbe"/><path d="M2.4,7.4 C4,6.8 5.6,7.8 7.4,7.8" fill="none" stroke="#38b8f0" stroke-width="0.7"/><path d="M9.4,0.4 C10.8,1.6 11,3.2 10,4.6 C10,3 9.8,1.8 9.4,0.4 Z" fill="#1c6cd0"/><path d="M4.6,7.8 L6.4,8.8 L7.6,7.6" fill="#ffe68a"/></g>
<circle cx="22.9" cy="248.6" r="2.9" fill="#8e8e96"/><circle cx="22.599999999999998" cy="248.2" r="2" fill="#bcbcc2"/><rect x="20.599999999999998" y="247.88" width="4.6" height="1.5" fill="#060608"/><rect x="22.15" y="246.33" width="1.5" height="4.6" fill="#060608"/>
<g transform="translate(29.6,256.9)"><path d="M1.6,1.6 C3.4,0.2 6.6,0.4 8.2,1.2 C8.8,3 8.8,5.6 8.2,7.6 C6.4,8.8 3.4,8.8 1.4,7.8 C0.8,5.8 0.8,3.4 1.6,1.6 Z" fill="#ffe68a"/><path d="M2.4,2 C3.6,1.4 4.6,1.6 5,2.6 M5.6,1.8 C6.6,1.6 7.4,2 7.6,3 M2.8,4.4 C4,5.6 6,5.6 7.2,4.2" fill="none" stroke="#ee5a1c" stroke-width="0.9"/><path d="M1.2,6.6 C3,5.4 5,6.4 6.4,7 C7.6,7.4 8.8,7 9.8,6 C9.4,8 7.8,9.2 5.8,9.2 C4,9.2 2.2,8.4 1.2,6.6 Z" fill="#165fbe"/><path d="M2.4,7.4 C4,6.8 5.6,7.8 7.4,7.8" fill="none" stroke="#38b8f0" stroke-width="0.7"/><path d="M9.4,0.4 C10.8,1.6 11,3.2 10,4.6 C10,3 9.8,1.8 9.4,0.4 Z" fill="#1c6cd0"/><path d="M4.6,7.8 L6.4,8.8 L7.6,7.6" fill="#ffe68a"/></g>
<circle cx="22.9" cy="262.3" r="2.9" fill="#8e8e96"/><circle cx="22.599999999999998" cy="261.9" r="2" fill="#bcbcc2"/><rect x="20.599999999999998" y="261.59" width="4.6" height="1.5" fill="#060608"/><rect x="22.15" y="260.04" width="1.5" height="4.6" fill="#060608"/>
<g transform="translate(19.8,270.6)"><path d="M1.6,1.6 C3.4,0.2 6.6,0.4 8.2,1.2 C8.8,3 8.8,5.6 8.2,7.6 C6.4,8.8 3.4,8.8 1.4,7.8 C0.8,5.8 0.8,3.4 1.6,1.6 Z" fill="#ffe68a"/><path d="M2.4,2 C3.6,1.4 4.6,1.6 5,2.6 M5.6,1.8 C6.6,1.6 7.4,2 7.6,3 M2.8,4.4 C4,5.6 6,5.6 7.2,4.2" fill="none" stroke="#ee5a1c" stroke-width="0.9"/><path d="M1.2,6.6 C3,5.4 5,6.4 6.4,7 C7.6,7.4 8.8,7 9.8,6 C9.4,8 7.8,9.2 5.8,9.2 C4,9.2 2.2,8.4 1.2,6.6 Z" fill="#165fbe"/><path d="M2.4,7.4 C4,6.8 5.6,7.8 7.4,7.8" fill="none" stroke="#38b8f0" stroke-width="0.7"/><path d="M9.4,0.4 C10.8,1.6 11,3.2 10,4.6 C10,3 9.8,1.8 9.4,0.4 Z" fill="#1c6cd0"/><path d="M4.6,7.8 L6.4,8.8 L7.6,7.6" fill="#ffe68a"/></g>
<circle cx="13.4" cy="276.1" r="2.9" fill="#8e8e96"/><circle cx="13.1" cy="275.7" r="2" fill="#bcbcc2"/><rect x="11.100000000000001" y="275.30" width="4.6" height="1.5" fill="#060608"/><rect x="12.65" y="273.75" width="1.5" height="4.6" fill="#060608"/>
<g transform="translate(18.8,282.7)"><rect x="0" y="0" width="12.2" height="11.8" fill="#7880a6"/><path d="M2,3.4 L6,1 L10.2,3.4 L10.2,8.2 L6,10.8 L2,8.2 Z" fill="#1a8ea4"/><path d="M2,3.4 L6,5.8 L10.2,3.4 M6,5.8 L6,10.8 M2,8.2 L6,5.8 L10.2,8.2 M6,1 L6,5.8" fill="none" stroke="#30d8e8" stroke-width="0.8"/><circle cx="6" cy="5.8" r="1.5" fill="#c8c040"/><circle cx="6" cy="5.8" r="0.7" fill="#205060"/><circle cx="3.6" cy="4.4" r="0.7" fill="#e8e060"/><circle cx="8.6" cy="4.4" r="0.7" fill="#e8e060"/><circle cx="6" cy="8.8" r="0.7" fill="#e8e060"/></g>
<circle cx="13.4" cy="289.8" r="2.9" fill="#8e8e96"/><circle cx="13.1" cy="289.4" r="2" fill="#bcbcc2"/><rect x="11.100000000000001" y="289.01" width="4.6" height="1.5" fill="#060608"/><rect x="12.65" y="287.46" width="1.5" height="4.6" fill="#060608"/>
<g transform="translate(20.5,297.1)"><path d="M0.6,10 L9.6,10 L10.4,11.8 L0.2,11.8 Z" fill="#8a8aa0"/><path d="M1.2,10.9 L9.6,10.9" stroke="#c0c0d0" stroke-width="0.6" stroke-dasharray="0.8 0.8"/><path d="M0.4,8.6 L8,2.4 L9.6,4.2 L2.2,10 Z" fill="#1e9aa0"/><path d="M0.4,8.6 L8,2.4" stroke="#50e0e8" stroke-width="0.8"/><path d="M4.4,6 L5.6,8 M6.2,4.6 L7.4,6.6" stroke="#e84820" stroke-width="1"/><path d="M8,2.4 L9.2,0.8 L10.2,2.2 L9.6,4.2" fill="#1878c0"/></g>
<circle cx="13.4" cy="303.5" r="2.9" fill="#8e8e96"/><circle cx="13.1" cy="303.1" r="2" fill="#bcbcc2"/><rect x="11.100000000000001" y="302.72" width="4.6" height="1.5" fill="#060608"/><rect x="12.65" y="301.17" width="1.5" height="4.6" fill="#060608"/>
<circle cx="13.4" cy="317.2" r="2.9" fill="#8e8e96"/><circle cx="13.1" cy="316.8" r="2" fill="#bcbcc2"/><rect x="11.100000000000001" y="316.43" width="4.6" height="1.5" fill="#060608"/><rect x="12.65" y="314.88" width="1.5" height="4.6" fill="#060608"/>
<g transform="translate(10.3,325.5)"><circle cx="4.4" cy="5.2" r="3.6" fill="none" stroke="#c4c868" stroke-width="1.6" stroke-dasharray="1.5 0.9"/><circle cx="4.4" cy="5.2" r="2.7" fill="#d8dc9c"/><circle cx="4.4" cy="5.2" r="1.6" fill="#404084"/><path d="M6.6,3 L8.6,1.2 M6.8,7.4 L8.8,8.6" stroke="#101018" stroke-width="0.8"/><circle cx="9" cy="0.9" r="1.1" fill="#f0b080"/><circle cx="9" cy="8.8" r="1.2" fill="#30d0f0"/></g>
<g transform="translate(20.3,338.2)"><rect x="0" y="0.4" width="9.4" height="11" fill="#26c6d6"/><path d="M1,0 L8,0 L10,2 L10,10.2 L1,10.2 Z" fill="#fdfbd4"/><path d="M8,0 L8,2 L10,2" fill="none" stroke="#b8b690" stroke-width="0.5"/><text x="2.1" y="8.7" font-family="Liberation Serif,serif" font-style="italic" font-weight="bold" font-size="9.6" fill="#0c0c0c">P</text></g>
<g transform="translate(20.3,351.9)"><rect x="0" y="0.4" width="9.4" height="11" fill="#26c6d6"/><path d="M1,0 L8,0 L10,2 L10,10.2 L1,10.2 Z" fill="#fdfbd4"/><path d="M8,0 L8,2 L10,2" fill="none" stroke="#b8b690" stroke-width="0.5"/><text x="2.1" y="8.7" font-family="Liberation Serif,serif" font-style="italic" font-weight="bold" font-size="9.6" fill="#0c0c0c">P</text></g>
<g transform="translate(20.3,365.6)"><rect x="0" y="0.4" width="9.4" height="11" fill="#26c6d6"/><path d="M1,0 L8,0 L10,2 L10,10.2 L1,10.2 Z" fill="#fdfbd4"/><path d="M8,0 L8,2 L10,2" fill="none" stroke="#b8b690" stroke-width="0.5"/><text x="2.1" y="8.7" font-family="Liberation Serif,serif" font-style="italic" font-weight="bold" font-size="9.6" fill="#0c0c0c">P</text></g>
<g transform="translate(20.3,379.3)"><rect x="0" y="0.4" width="9.4" height="11" fill="#26c6d6"/><path d="M1,0 L8,0 L10,2 L10,10.2 L1,10.2 Z" fill="#fdfbd4"/><path d="M8,0 L8,2 L10,2" fill="none" stroke="#b8b690" stroke-width="0.5"/><text x="2.1" y="8.7" font-family="Liberation Serif,serif" font-style="italic" font-weight="bold" font-size="9.6" fill="#0c0c0c">P</text></g>
<text transform="translate(52.1,73.70) scale(0.665,1) rotate(0.03)" font-family="Liberation Sans,sans-serif" font-size="7.2" fill="#eeeefc">Base</text>
<text transform="translate(61.9,87.41) scale(0.814,1) rotate(0.03)" font-family="Liberation Sans,sans-serif" font-size="7.2" fill="#eeeefc">Surface Untrim.5</text>
<text transform="translate(61.9,101.12) scale(0.809,1) rotate(0.03)" font-family="Liberation Sans,sans-serif" font-size="7.2" fill="#eeeefc">Extrapol.5</text>
<text transform="translate(61.9,114.83) scale(0.846,1) rotate(0.03)" font-family="Liberation Sans,sans-serif" font-size="7.2" fill="#eeeefc">Offset.5</text>
<text transform="translate(61.3,128.54) scale(0.806,1) rotate(0.03)" font-family="Liberation Sans,sans-serif" font-size="7.2" fill="#eeeefc">Trim.4</text>
<text transform="translate(52.1,142.25) scale(0.827,1) rotate(0.03)" font-family="Liberation Sans,sans-serif" font-size="7.2" fill="#eeeefc">Measure for Fillets</text>
<text transform="translate(61.9,155.96) scale(0.775,1) rotate(0.03)" font-family="Liberation Sans,sans-serif" font-size="7.2" fill="#eeeefc">Extract.6</text>
<text transform="translate(61.9,169.67) scale(0.819,1) rotate(0.03)" font-family="Liberation Sans,sans-serif" font-size="7.2" fill="#eeeefc">Surface Untrim.6</text>
<text transform="translate(51.8,183.38) scale(0.787,1) rotate(0.03)" font-family="Liberation Sans,sans-serif" font-size="7.2" fill="#eeeefc">B Surface Trim</text>
<text transform="translate(61.9,197.09) scale(0.819,1) rotate(0.03)" font-family="Liberation Sans,sans-serif" font-size="7.2" fill="#eeeefc">EdgeFillet.6</text>
<text transform="translate(71.7,210.80) scale(0.787,1) rotate(0.03)" font-family="Liberation Sans,sans-serif" font-size="7.2" fill="#eeeefc">Radius</text>
<text transform="translate(62.0,224.51) scale(0.677,1) rotate(0.03)" font-family="Liberation Sans,sans-serif" font-size="7.2" fill="#ffcf9c">B SURFACE</text>
<text transform="translate(71.7,238.22) scale(0.787,1) rotate(0.03)" font-family="Liberation Sans,sans-serif" font-size="7.2" fill="#eeeefc">Radius</text>
<text transform="translate(42.4,251.93) scale(0.762,1) rotate(0.03)" font-family="Liberation Sans,sans-serif" font-size="7.2" fill="#eeeefc">Class C Surface</text>
<text transform="translate(42.4,265.64) scale(0.815,1) rotate(0.03)" font-family="Liberation Sans,sans-serif" font-size="7.2" fill="#eeeefc">Final Trim</text>
<text transform="translate(32.3,279.35) scale(0.805,1) rotate(0.03)" font-family="Liberation Sans,sans-serif" font-size="7.2" fill="#eeeefc">Final Closed Surface</text>
<text transform="translate(32.3,293.06) scale(0.807,1) rotate(0.03)" font-family="Liberation Sans,sans-serif" font-size="7.2" fill="#eeeefc">Switch Bezel Solid</text>
<text transform="translate(33.0,306.77) scale(0.798,1) rotate(0.03)" font-family="Liberation Sans,sans-serif" font-size="7.2" fill="#eeeefc">Free Form Analysis.2</text>
<text transform="translate(19.4,320.48) scale(0.801,1) rotate(0.03)" font-family="Liberation Sans,sans-serif" font-size="7.2" fill="#eeeefc">Measure</text>
<text transform="translate(23.3,334.19) scale(0.819,1) rotate(0.03)" font-family="Liberation Sans,sans-serif" font-size="7.2" fill="#fff0e0">Publication</text>
<text transform="translate(32.4,347.90) scale(0.753,1) rotate(0.03)" font-family="Liberation Sans,sans-serif" font-size="7.2" fill="#eeeefc">TOOLING AXIS</text>
<text transform="translate(32.4,361.61) scale(0.707,1) rotate(0.03)" font-family="Liberation Sans,sans-serif" font-size="7.2" fill="#eeeefc">CLASS A</text>
<text transform="translate(33.0,375.32) scale(0.680,1) rotate(0.03)" font-family="Liberation Sans,sans-serif" font-size="7.2" fill="#ffcf9c">B SURFACE</text>
<text transform="translate(32.4,389.03) scale(0.762,1) rotate(0.03)" font-family="Liberation Sans,sans-serif" font-size="7.2" fill="#eeeefc">Class C Surface</text>
<g transform="translate(13.3,26.6) scale(0.95)"><circle cx="6" cy="6.2" r="5" fill="none" stroke="#a6a6b0" stroke-width="2"/><path d="M2.2,7.2 C3,3.4 6,3.6 6.2,6 C6.4,8.6 9.2,8.6 10,5.2" fill="none" stroke="#a6a6b0" stroke-width="1.9"/><circle cx="6" cy="6.2" r="6.1" fill="none" stroke="#e4e4ee" stroke-width="0.6"/><path d="M2.6,6.6 C3.4,4.2 5.6,4.4 5.8,6.2" fill="none" stroke="#d8d8e2" stroke-width="0.6"/></g>
<g transform="translate(27.9,26.6) scale(0.95)"><circle cx="5.6" cy="5.8" r="5.4" fill="#1c3c8c"/><path d="M1.6,8.6 C0.8,5 3,2 5.6,1.6 C3.8,3.4 3.4,6 4.2,8.8 Z" fill="#ffe870"/><path d="M6.6,1.4 C8.6,1.8 10,3.2 10.4,5 L8.6,4.4 Z" fill="#38c8f0"/><path d="M5.2,5.2 L5.2,10.6 L9.2,10.6 C10.2,9 10.2,7 9.4,5.6 L8.2,5 L7.4,4.8 L7,2.6 L5.9,2.6 L5.9,5.2 Z" fill="#fbfbfb"/><path d="M5.2,5.2 L5.2,10.6 L9.2,10.6" fill="none" stroke="#404048" stroke-width="0.4"/></g>
<g transform="translate(41.9,26.6) scale(0.95)"><path d="M5.4,6.4 L5.8,1.6 M5.4,6.4 L1.8,10.6 M5.4,6.4 L10.4,7.6" stroke="#5c4a3a" stroke-width="1" fill="none"/><circle cx="5.8" cy="1.4" r="0.9" fill="#2840a0"/><circle cx="1.8" cy="10.6" r="0.9" fill="#2840a0"/><circle cx="10.6" cy="7.6" r="0.9" fill="#2840a0"/></g>
<g transform="translate(56.9,26.6) scale(0.95)"><rect x="0.2" y="0.6" width="11.6" height="11" fill="#e2e2f2"/><path d="M0.8,6 L3.4,6 M3.4,2.6 L3.4,9.6 M3.4,2.6 L6,2.6 M3.4,6 L6,6 M3.4,9.6 L6,9.6 M7.6,1.6 L7.6,3.6 M7.6,5 L7.6,7 M7.6,8.6 L7.6,10.6" stroke="#2a5ee8" stroke-width="1.1" fill="none"/><path d="M5.4,2.6 L10.8,2.6 M5.4,6 L11.2,6 M5.4,9.6 L10.8,9.6" stroke="#2a5ee8" stroke-width="1.3" stroke-dasharray="1.6 1"/><path d="M8.6,4.2 L11,4.2 M8.6,7.8 L11,7.8" stroke="#20c0f0" stroke-width="1"/></g>
<g transform="translate(71.3,26.6) scale(0.95)"><path d="M1.6,0.8 L1.6,10.8 M4.6,0.8 L4.6,10.8 M7.6,0.8 L7.6,10.8 M10.6,0.8 L10.6,10.8 M0.4,1.8 L11.6,1.8 M0.4,4.8 L11.6,4.8 M0.4,7.8 L11.6,7.8" stroke="#3c7cf0" stroke-width="1" fill="none"/><path d="M0.4,10.4 L11.6,10.4" stroke="#3c7cf0" stroke-width="0.9" stroke-dasharray="1 1"/><circle cx="1.6" cy="1.8" r="0.8" fill="#2a60e0"/><circle cx="1.6" cy="4.8" r="0.8" fill="#2a60e0"/><circle cx="1.6" cy="7.8" r="0.8" fill="#2a60e0"/><circle cx="4.6" cy="1.8" r="0.8" fill="#2a60e0"/><circle cx="4.6" cy="4.8" r="0.8" fill="#2a60e0"/><circle cx="4.6" cy="7.8" r="0.8" fill="#2a60e0"/><circle cx="7.6" cy="1.8" r="0.8" fill="#2a60e0"/><circle cx="7.6" cy="4.8" r="0.8" fill="#2a60e0"/><circle cx="7.6" cy="7.8" r="0.8" fill="#2a60e0"/><circle cx="10.6" cy="1.8" r="0.8" fill="#2a60e0"/><circle cx="10.6" cy="4.8" r="0.8" fill="#2a60e0"/><circle cx="10.6" cy="7.8" r="0.8" fill="#2a60e0"/></g>
<g transform="translate(87.3,26.6) scale(0.95)"><path d="M1.6,2.4 C1.6,0.2 10.4,0.2 10.4,2.4 L10.4,9.6 C10.4,11.8 1.6,11.8 1.6,9.6 Z" fill="#28d4e4"/><ellipse cx="6" cy="2.4" rx="4.4" ry="1.6" fill="#7af0f8"/><path d="M1.6,2.4 C1.6,0.2 10.4,0.2 10.4,2.4 L10.4,9.6 C10.4,11.8 1.6,11.8 1.6,9.6 Z M1.6,2.4 C1.6,4.6 10.4,4.6 10.4,2.4" fill="none" stroke="#0c5a68" stroke-width="0.8"/><path d="M0.6,7.6 L11.4,6.6" stroke="#a8f4f8" stroke-width="0.9"/></g>
<g transform="translate(102.7,26.6) scale(0.95)"><path d="M1.4,3.4 L4,1.2 L10.8,1.2 L10.8,8 L8.2,10.6 L1.4,10.6 Z" fill="#18b8c8"/><rect x="2.8" y="4.6" width="4.4" height="4.6" fill="#68f0f8"/><path d="M1.4,3.4 L4,1.2 L10.8,1.2 L10.8,8 L8.2,10.6 L1.4,10.6 Z M1.4,3.4 L8.2,3.4 L8.2,10.6 M8.2,3.4 L10.8,1.2" fill="none" stroke="#0a4c5c" stroke-width="0.9"/></g>
<g transform="translate(116.7,26.6) scale(0.95)"><circle cx="2.6" cy="2.6" r="1.3" fill="none" stroke="#2858e0" stroke-width="0.8"/><path d="M3.6,2.6 L6,2.6" stroke="#2858e0" stroke-width="0.8"/><circle cx="9.8" cy="8" r="1.3" fill="none" stroke="#2858e0" stroke-width="0.8"/><path d="M6.6,8 L8.6,8" stroke="#2858e0" stroke-width="0.8"/><path d="M5.6,2.4 L3.6,6.4 L6,6 L4.4,10.4 L8,5 L5.6,5.4 L7.4,2.4 Z" fill="#e0182c"/></g>
<g transform="translate(131.7,26.6) scale(0.95)"><path d="M0.6,6 C2,2.2 7.6,0.8 11.4,2 L9.6,4.6 C7.4,3.8 4.6,4.6 3.2,6.8 Z" fill="#f6f6fa"/><path d="M1.6,8.6 C3.4,6.4 6.4,6 8.8,6.8 L11,8.8 C9.4,11 4.4,11.4 2.2,10.4 Z" fill="#efeff4"/><path d="M0.6,6 C2,2.2 7.6,0.8 11.4,2 L9.6,4.6 M1.6,8.6 C3.4,6.4 6.4,6 8.8,6.8 L11,8.8 M2.2,10.4 C4.4,11.4 9.4,11 11,8.8 M3.2,6.8 C4.6,4.6 7.4,3.8 9.6,4.6 M0.6,6 L3.2,6.8 M1.6,8.6 L2.2,10.4" fill="none" stroke="#9898a4" stroke-width="0.75"/></g>
<g transform="translate(146.3,26.6) scale(0.95)"><path d="M1.4,1 L1.4,11" stroke="#2a4ee8" stroke-width="1.2"/><path d="M1.4,2.2 L5,2.2 M1.4,6 L4,6 M1.4,9.8 L5,9.8 M6.4,6 L8,6" stroke="#2a4ee8" stroke-width="1"/><rect x="2.6" y="1" width="3.4" height="2.4" fill="#30d0f0"/><rect x="2.6" y="8.6" width="3.4" height="2.4" fill="#30d0f0"/><rect x="3.4" y="4.8" width="3.2" height="2.4" fill="#3080f0"/><rect x="8" y="4.8" width="3.6" height="2.4" fill="#30b8f0"/><path d="M0.4,6 L2.8,6" stroke="#101010" stroke-width="0.9"/></g>
<g transform="translate(161.7,26.6) scale(0.95)"><path d="M1,4.6 C2,1.2 6.4,0.4 8.4,2.2" fill="none" stroke="#e8e8f4" stroke-width="1.2"/><path d="M1.4,6.4 L2.4,3.4 L4.4,4.6" fill="none" stroke="#3060e0" stroke-width="0.8"/><path d="M3.2,5.4 C3.6,2.6 8,1.8 9.6,4.4 C10.8,6.2 10.4,8.4 9.6,10 C8.6,8.6 6.8,8 5,9.6 C4.6,8 3.6,7.2 3.2,5.4 Z" fill="#ffff18"/><path d="M3.2,5.4 C3.6,2.6 8,1.8 9.6,4.4 C10.8,6.2 10.4,8.4 9.6,10 C8.6,8.6 6.8,8 5,9.6" fill="none" stroke="#3058d8" stroke-width="0.8"/></g>
<g transform="translate(175.9,26.6) scale(0.95)"><ellipse cx="6" cy="2.4" rx="2.8" ry="1.3" fill="#30c8f0"/><ellipse cx="6" cy="5.6" rx="2.8" ry="1.3" fill="#30c8f0"/><ellipse cx="6" cy="8.8" rx="2.8" ry="1.3" fill="#30c8f0"/><path d="M3.2,2.4 L3.2,3.6 C3.2,5 8.8,5 8.8,3.6 L8.8,2.4 M3.2,5.6 L3.2,6.8 C3.2,8.2 8.8,8.2 8.8,6.8 L8.8,5.6 M3.2,8.8 L3.2,10 C3.2,11.4 8.8,11.4 8.8,10 L8.8,8.8" fill="#3a5ee8" stroke="#3a5ee8" stroke-width="0.5"/><ellipse cx="6" cy="2.4" rx="2.8" ry="1.3" fill="#50d8f4"/><ellipse cx="6" cy="5.6" rx="2.8" ry="1.2" fill="#50d8f4"/><ellipse cx="6" cy="8.8" rx="2.8" ry="1.2" fill="#50d8f4"/></g>
<g transform="translate(190.9,26.6) scale(0.95)"><path d="M0.8,5.6 L6.6,1 L11.4,3.6 L11.4,6.6 L5.6,11.2 L0.8,8.6 Z" fill="#f2f6ff"/><path d="M0.8,7.2 L5.6,9.8 L11.4,5.2 L11.4,6.6 L5.6,11.2 L0.8,8.6 Z" fill="#60e4f0"/><path d="M0.8,5.6 L6.6,1 L11.4,3.6 L5.6,8.2 Z M0.8,5.6 L0.8,8.6 L5.6,11.2 L11.4,6.6 L11.4,3.6 M5.6,8.2 L5.6,11.2" fill="none" stroke="#2c34f0" stroke-width="0.9"/></g>
<g transform="translate(302.3,26.6) scale(0.95)"><path d="M1,7 L6.4,3.6 L11,5.6 L10.4,8.4 L4.6,11.2 L1.2,9.6 Z" fill="#7a12e4"/><path d="M1,7 L6.4,3.6 L11,5.6 L5.2,8.6 Z" fill="#a060f4"/><path d="M4.8,6.6 L8.6,2.4" stroke="#c8a830" stroke-width="1.3"/><circle cx="9" cy="2" r="1.1" fill="#f0d840"/></g>
<g transform="translate(316.9,26.6) scale(0.95)"><path d="M6,1.4 L10.6,2.2 L9.6,5.2 L11,8.8 L6.4,10.6 Z" fill="#7a12e4"/><path d="M6.4,5.6 L9.6,5.2 L8,6.4 Z" fill="#d5d5ec"/><path d="M4.6,1.6 L4.6,10.8" stroke="#e8e8f4" stroke-width="1.6"/><circle cx="3.6" cy="7.4" r="1.2" fill="#f0e040"/><path d="M2.4,4.6 L4.4,6.4" stroke="#a09020" stroke-width="0.8"/></g>
<g transform="translate(331.9,26.6) scale(0.95)"><path d="M1,9 L5,2.4 L9.4,1.8 L11,4.6 L9.6,9.2 L4,10.8 Z" fill="#7a12e4"/><path d="M5,2.4 L7.6,6 L4,10.8 L1,9 Z" fill="#9648f0"/><path d="M5,2.4 L9.4,1.8 L7.6,6 Z" fill="#b888f8"/></g>
<g transform="translate(346.3,26.6) scale(0.95)"><path d="M1,9.4 L7.8,2.6 L11,4 L10.4,7.4 L5,10.8 Z" fill="#7a12e4"/><path d="M1,9.4 L7.8,2.6 L8,6.2 L5,8.4 Z" fill="#a868f4"/><path d="M1,9.4 L5,8.4 L10.4,7.4 L5,10.8 Z" fill="#5a00c0"/></g>
<g transform="translate(360.9,26.6) scale(0.95)"><path d="M1,3 L1.4,8.6 L7.4,11 L11,8.8 L11,3.6 Z" fill="#6a0cd4"/><path d="M1,3 C3,1 5,1 7.6,2.8 L11,3.6 C10.6,5.6 9,6.6 7.4,6.4 C5,5.6 3,5 1,5.2 Z" fill="#30e0f0"/><path d="M1.2,7 L7.4,9 L11,7.2" fill="none" stroke="#9a50f0" stroke-width="0.7"/></g>
<g transform="translate(375.3,26.6) scale(0.95)"><path d="M1,8 L7.4,2 C9.6,1.4 11,2.8 10.8,4.8 L5,10.6 C3,11.2 1,10 1,8 Z" fill="#38e0f0"/><ellipse cx="3" cy="9.2" rx="2.2" ry="1.8" transform="rotate(-40 3 9.2)" fill="#6a0cd4"/><path d="M7.4,2 C9.6,1.4 11,2.8 10.8,4.8" fill="none" stroke="#0a8090" stroke-width="0.6"/></g>
<g transform="translate(393.9,26.6) scale(0.95)"><path d="M2,3.4 L5.4,1.2 L10,2.4 L9.6,9 L6,11 L2.4,9.8 Z" fill="#7a12e4"/><path d="M5.4,1.2 L10,2.4 L9.6,9 L6,11 Z" fill="#18b8c8"/><path d="M2,3.4 L5.4,1.2 L10,2.4 L6.4,4.4 Z" fill="#50e8f4"/><path d="M2,3.4 L6.4,4.4 L6,11" fill="none" stroke="#202030" stroke-width="0.5"/></g>
<g transform="translate(409.3,26.6) scale(0.95)"><path d="M1,8.6 L4.4,1.6 L10.4,2.4 L7.4,10.6 Z" fill="#7a12e4"/><path d="M5.4,3.6 L9,4 L6.8,9 L3.6,8.4 Z" fill="#101040"/><path d="M7.4,10.6 L10.4,2.4 L11.4,4 L8.8,10.6 Z" fill="#30d8e8"/></g>
<g transform="translate(423.7,26.6) scale(0.95)"><path d="M1,2.6 L4.6,1.4 L4.6,10 L1,10.6 Z" fill="#7a12e4"/><path d="M4.6,1.4 L8,2.2 L8,10.8 L4.6,10 Z" fill="#30e0f0"/><path d="M8,2.2 L11,1.6 L11,9.6 L8,10.8 Z" fill="#6a0cd4"/><path d="M1,2.6 L4.6,1.4 L8,2.2 L11,1.6" fill="none" stroke="#a878f8" stroke-width="0.6"/></g>
<g transform="translate(438.3,26.6) scale(0.95)"><rect x="1" y="1.6" width="10" height="9.4" fill="#e0b0b0"/><path d="M1.6,2.4 L5,1.8 L5,10.4 L1.6,10 Z" fill="#30d0e8"/><path d="M5,1.8 L10.4,2.4 L10.4,9.8 L5,10.4 Z" fill="#8a40e8"/><circle cx="8.4" cy="5.6" r="1.6" fill="none" stroke="#e8e8ff" stroke-width="0.7"/><path d="M5.4,6.4 L7,6.4" stroke="#ffffff" stroke-width="0.8"/></g>
<g transform="translate(457.3,26.6) scale(0.95)"><circle cx="4.6" cy="3.6" r="2.6" fill="#7a12e4"/><circle cx="8" cy="4.6" r="2.8" fill="#6a0cd4"/><circle cx="4" cy="7.6" r="2.8" fill="#6a0cd4"/><circle cx="7.4" cy="8.2" r="2.6" fill="#7a12e4"/><path d="M3,3 C4,2 5.6,2 6.4,3 M6.6,6 L9.6,6.4 M3,8 L5.6,8.6" stroke="#a868f8" stroke-width="0.8" fill="none"/></g>
<g transform="translate(487.9,26.6) scale(0.95)"><path d="M0.6,7.6 L5.6,5.4 L10,8 L4.8,10.6 Z" fill="#e8f090"/><path d="M0.6,7.6 L4.8,10.6 L10,8" fill="none" stroke="#30c8e8" stroke-width="1"/><path d="M4.6,7.8 L8.6,2.4" stroke="#e89040" stroke-width="1.2"/><rect x="7.6" y="0.8" width="2.6" height="2.4" fill="#f07828"/><circle cx="4.6" cy="7.8" r="1" fill="#f0b040"/></g>
<g transform="translate(503.3,26.6) scale(0.95)"><path d="M1,5.4 C3,1.2 8.6,0.8 11,4.4 L9.8,5.8 C7.6,3 4.4,3.2 2.6,6.4 Z" fill="#3a8cf0"/><path d="M1.4,4.6 C3.6,1.6 8,1.4 10.4,4" fill="none" stroke="#b8a0f0" stroke-width="0.9"/><path d="M2,10.6 C3.6,8.2 8,8.2 10,10.6 L8.8,11.4 C7.4,9.8 4.6,9.8 3.2,11.4 Z" fill="#30d0e8"/><path d="M6,4.4 L6,9.6" stroke="#e85818" stroke-width="1.2"/><path d="M4.8,6.4 L6,4 L7.2,6.4 Z" fill="#f09020"/></g>
<g transform="translate(519.3,26.6) scale(0.95)"><path d="M3.4,3.4 L9.4,1.4 C10.8,4 10,7.6 7,10.8 L3.6,8.8 C5,7 5,5 3.4,3.4 Z" fill="#30d0e8"/><path d="M3.4,3.4 C5,5 5,7 3.6,8.8" fill="none" stroke="#185ad0" stroke-width="1"/><path d="M9.4,1.4 C10.8,4 10,7.6 7,10.8" fill="none" stroke="#1878c8" stroke-width="0.8"/><path d="M0.8,4 L3.4,1.6 M2,1.6 L3.4,1.6 L3.2,3" fill="none" stroke="#303038" stroke-width="0.7"/></g>
<g transform="translate(534.9,26.6) scale(0.95)"><path d="M0.8,9.6 C1,4 3.6,1 6,1 C8.4,1 11,4 11.2,9.6 C8,8 4,8 0.8,9.6 Z" fill="#30d0e8"/><path d="M6,2.6 L9,7 L3,7 Z" fill="#f8f0a0"/><path d="M6,2.6 L9,7 L3,7 Z" fill="none" stroke="#f08828" stroke-width="0.9"/><path d="M0.8,9.6 C1,4 3.6,1 6,1 C8.4,1 11,4 11.2,9.6" fill="none" stroke="#1878c8" stroke-width="0.8"/><path d="M1.6,11 C4.6,9.6 7.4,9.6 10.4,11" fill="none" stroke="#30d0e8" stroke-width="1"/></g>
<g transform="translate(549.3,26.6) scale(0.95)"><path d="M1.4,10.6 C1,5 3.4,1.4 6,1.4 C8.6,1.4 11,5 10.6,10.6" fill="none" stroke="#90a030" stroke-width="1"/><path d="M2.4,6 C4,3.4 8,3.4 9.6,6 L9.6,7.6 C8,5.6 4,5.6 2.4,7.6 Z" fill="#30d0e8"/><path d="M3,9.4 C4.6,7.6 7.4,7.6 9,9.4 L9,10.8 C7.4,9.2 4.6,9.2 3,10.8 Z" fill="#3a8cf0"/></g>
<g transform="translate(563.9,26.6) scale(0.95)"><path d="M1,3.4 L8,1 L11,3 L4,5.6 Z" fill="#30d0e8"/><path d="M1,5.4 L4,7.6 L11,5 L8,3.4 Z" fill="#f0e040"/><path d="M1,7.6 L4,9.8 L11,7.2 L11,9 L4,11.6 L1,9.4 Z" fill="#1890c0"/><path d="M1,3.4 L4,5.6 L11,3" fill="none" stroke="#0c6090" stroke-width="0.6"/></g>
<g transform="translate(587.9,26.6) scale(0.95)"><rect x="0.8" y="0.8" width="10.4" height="10.4" fill="#1c5cb0"/><circle cx="3.4" cy="3.4" r="1.9" fill="#3a9cf4"/><circle cx="8.6" cy="3.4" r="1.9" fill="#3a9cf4"/><circle cx="3.4" cy="8.6" r="2" fill="#30d0e8"/><circle cx="8.6" cy="8.6" r="1.9" fill="#3a9cf4"/></g>
<g transform="translate(603.3,26.6) scale(0.95)"><path d="M1,2 L8.6,1 L11,3.4 L4,5.6 Z" fill="#f4f4fa"/><path d="M1.6,6 L5,4.6 L10.6,7 L6.4,11 Z" fill="#30d0e8"/><path d="M1.6,6 L6.4,11" stroke="#1858d0" stroke-width="1"/><circle cx="9.6" cy="2.2" r="1.2" fill="#f0d040"/><path d="M0.8,9 L3,7.4" stroke="#2040c0" stroke-width="1"/></g>
<g transform="translate(619.3,26.6) scale(0.95)"><path d="M0.8,9.4 C1,4.4 3.4,2.4 6,2.4 C8.6,2.4 11,4.4 11.2,9.4 C8,7.4 4,7.4 0.8,9.4 Z" fill="#30d0e8"/><path d="M2,8.6 C4.6,7 7.4,7 10,8.6" fill="none" stroke="#f0e040" stroke-width="1.3"/><path d="M0.8,9.4 C1,4.4 3.4,2.4 6,2.4 C8.6,2.4 11,4.4 11.2,9.4" fill="none" stroke="#1878c8" stroke-width="0.7"/></g>
<g transform="translate(635.3,26.6) scale(0.95)"><path d="M1,2.4 L4,1 C8,1.4 10.8,4.6 10.4,10 L7.6,11.2 C8,6.6 5.6,3.6 1.6,3.8 Z" fill="#f8d8a8"/><path d="M1,2.4 L4,1 C8,1.4 10.8,4.6 10.4,10" fill="none" stroke="#20b8d8" stroke-width="1.1"/><path d="M7.6,11.2 L10.4,10" stroke="#20b8d8" stroke-width="1.1"/><path d="M1.6,3.8 C5.6,3.6 8,6.6 7.6,11.2" fill="none" stroke="#e86040" stroke-width="0.7"/></g>
<g transform="translate(650.9,26.6) scale(0.95)"><path d="M1,3.4 L4,1.4 L4,8.4 L1,10.4 Z" fill="#50d8ec"/><path d="M7,4.6 L11,2 L11,8.4 L7,11 Z" fill="#50d8ec"/><path d="M4,8.4 L5.6,10.6 L7,9" fill="none" stroke="#202028" stroke-width="0.9"/><path d="M1,3.4 L4,1.4 L4,8.4 L1,10.4 Z M7,4.6 L11,2 L11,8.4 L7,11 Z" fill="none" stroke="#1c88b8" stroke-width="0.5"/></g>
<g transform="translate(666.3,26.6) scale(0.95)"><path d="M1,6.4 L6.4,2 L11,6 L5.6,11 Z" fill="#30d0e8"/><path d="M5,3 L7.6,1 L10.6,3.6 L8,5.6 Z" fill="#f8e838"/><path d="M1,6.4 L5.6,11" stroke="#1858d0" stroke-width="1"/><circle cx="9.6" cy="1.6" r="0.9" fill="#202028"/><path d="M0.6,8 L2.4,6.4" stroke="#202028" stroke-width="0.8"/></g>
<g transform="translate(692.9,26.6) scale(0.95)"><path d="M0.8,10 C1,6 3.4,4 6,4 C8.6,4 11,6 11.2,10 C8,8.4 4,8.4 0.8,10 Z" fill="#30d0e8"/><path d="M6,4.6 L8,8 L4,8 Z" fill="#f8e838"/><path d="M6,1.4 L6,4.6" stroke="#202028" stroke-width="0.8"/><circle cx="6" cy="1.2" r="0.8" fill="#202028"/><path d="M0.8,10 C1,6 3.4,4 6,4 C8.6,4 11,6 11.2,10" fill="none" stroke="#1878c8" stroke-width="0.7"/></g>
<g transform="translate(707.9,26.6) scale(0.95)"><path d="M1,4 L8,1 L11.4,3.6 L4.6,7 Z" fill="#30d0e8"/><path d="M2.4,4.6 L8,2.4 L10,4 L4.6,6.4 Z" fill="#e8d860"/><path d="M1,6.6 L4.6,9.4 L11.4,6 L11.4,8 L4.6,11.4 L1,8.6 Z" fill="#30d0e8"/><path d="M1,5.4 L4.6,8.2 L11.4,4.8" fill="none" stroke="#202028" stroke-width="1"/><path d="M0.6,10.6 L2.6,8.6" stroke="#202028" stroke-width="0.8"/></g>
<g transform="translate(721.9,26.6) scale(0.95)"><path d="M2,3.6 L8,1 L11.4,3.6 L5.4,6.6 Z" fill="#30d0e8"/><path d="M3.4,4 L8,2.2 L10,3.8 L5.4,5.8 Z" fill="#e8d860"/><path d="M2,6 L5.4,8.8 L11.4,5.8 L11.4,7.6 L5.4,10.8 L2,8 Z" fill="#a8a8b8"/><path d="M1.2,2.6 L1.2,10.8" stroke="#f08020" stroke-width="1.3"/></g>
<g transform="translate(736.3,26.6) scale(0.95)"><path d="M0.8,3.6 L5,1.4 L9.6,3 L6,5.4 Z" fill="#50d8ec"/><path d="M2,6 L6,5.4 L11,8 L7,10.6 Z" fill="#30c8e0"/><path d="M2,5.4 L11,6.4" stroke="#0c7088" stroke-width="0.8"/><circle cx="8.8" cy="1.8" r="0.8" fill="#202028"/><path d="M8.4,8.6 L10.4,11" stroke="#404048" stroke-width="0.9"/></g>
<path d="M82.0,37.5 L85.2,37.5 L83.6,39.3 Z" fill="#101010"/>
<path d="M97.6,37.5 L100.8,37.5 L99.2,39.3 Z" fill="#101010"/>
<path d="M171.8,37.5 L175.0,37.5 L173.4,39.3 Z" fill="#101010"/>
<path d="M201.4,37.5 L204.6,37.5 L203.0,39.3 Z" fill="#101010"/>
<path d="M404.4,37.5 L407.6,37.5 L406.0,39.3 Z" fill="#101010"/>
<path d="M468.0,37.5 L471.2,37.5 L469.6,39.3 Z" fill="#101010"/>
<path d="M498.0,37.5 L501.2,37.5 L499.6,39.3 Z" fill="#101010"/>
<path d="M513.6,37.5 L516.8,37.5 L515.2,39.3 Z" fill="#101010"/>
<path d="M529.2,37.5 L532.4,37.5 L530.8,39.3 Z" fill="#101010"/>
<path d="M598.4,37.5 L601.6,37.5 L600.0,39.3 Z" fill="#101010"/>
<path d="M614.4,37.5 L617.6,37.5 L616.0,39.3 Z" fill="#101010"/>
<path d="M630.0,37.5 L633.2,37.5 L631.6,39.3 Z" fill="#101010"/>
<path d="M645.8,37.5 L649.0,37.5 L647.4,39.3 Z" fill="#101010"/>
<path d="M661.2,37.5 L664.4,37.5 L662.8,39.3 Z" fill="#101010"/>
<path d="M677.0,37.5 L680.2,37.5 L678.6,39.3 Z" fill="#101010"/>
<rect x="6.6" y="24.6" width="1.1" height="7.399999999999999" fill="#f6f6fc"/><rect x="7.7" y="24.900000000000002" width="0.7" height="7.399999999999999" fill="#a4a4b6"/>
<rect x="296.6" y="24.6" width="1.1" height="7.399999999999999" fill="#f6f6fc"/><rect x="297.7" y="24.900000000000002" width="0.7" height="7.399999999999999" fill="#a4a4b6"/>
<rect x="481.6" y="24.6" width="1.1" height="7.399999999999999" fill="#f6f6fc"/><rect x="482.7" y="24.900000000000002" width="0.7" height="7.399999999999999" fill="#a4a4b6"/>
<rect x="582.2" y="24.6" width="1.1" height="7.399999999999999" fill="#f6f6fc"/><rect x="583.3" y="24.900000000000002" width="0.7" height="7.399999999999999" fill="#a4a4b6"/>
<rect x="686.8" y="24.6" width="1.1" height="7.399999999999999" fill="#f6f6fc"/><rect x="687.9" y="24.900000000000002" width="0.7" height="7.399999999999999" fill="#a4a4b6"/>
<rect x="389.1" y="25" width="0.8" height="15" fill="#a8a8ba"/><rect x="389.9" y="25" width="0.8" height="15" fill="#f4f4fb"/>
<rect x="452.1" y="25" width="0.8" height="15" fill="#a8a8ba"/><rect x="452.9" y="25" width="0.8" height="15" fill="#f4f4fb"/>
<rect x="16.6" y="45.6" width="1.1" height="7.0" fill="#f6f6fc"/><rect x="17.7" y="45.9" width="0.7" height="7.0" fill="#a4a4b6"/>
<rect x="483.2" y="45.6" width="1.1" height="7.0" fill="#f6f6fc"/><rect x="484.3" y="45.9" width="0.7" height="7.0" fill="#a4a4b6"/>
<g transform="translate(242.7,47.1) scale(0.95)"><path d="M0.6,7 L5,5 L7.4,8 L6.6,11.2 L1,11.2 Z" fill="#2a9cf0"/><path d="M0.6,7 L5,5 L6,6.2 L1.4,8.4 Z" fill="#70d0f8"/><path d="M5.4,6 L8,3.6 L9.4,5.4 L7,7.8 Z" fill="#f4e070"/><path d="M8.4,3.6 L10.8,1 L11.6,1.8 L9.4,4.8 Z" fill="#181850"/></g>
<g transform="translate(257.3,47.1) scale(0.95)"><circle cx="4.6" cy="8" r="3.6" fill="#ffd028"/><path d="M1.2,9 C2.4,11.6 6.8,11.6 8,9 C6,10 3.2,10 1.2,9 Z" fill="#f060c0"/><circle cx="3.6" cy="6.8" r="1.2" fill="#fff4a0"/><path d="M7,4.4 L9.4,2.4 L11,4.6" fill="none" stroke="#f07030" stroke-width="1.2"/><path d="M8,4.6 L10.4,7.6" stroke="#2038b0" stroke-width="1.3"/></g>
<g transform="translate(490.1,47.1) scale(0.95)"><circle cx="5.8" cy="6.2" r="1.1" fill="#10206c"/><circle cx="5.8" cy="6.2" r="1.7" fill="none" stroke="#50b0e8" stroke-width="0.5"/></g>
<g transform="translate(504.9,47.1) scale(0.95)"><path d="M1.6,10.6 L10.2,1.4" stroke="#2450c0" stroke-width="1.2"/><path d="M2,10.8 L10.6,1.8" stroke="#50c0e8" stroke-width="0.4"/></g>
<g transform="translate(521.1,47.1) scale(0.95)"><path d="M0.6,8.6 L4.6,4.6 L11.4,4.6 L7.6,8.6 Z" fill="#f4ee90"/><path d="M0.6,8.6 L4.6,4.6 L11.4,4.6 L7.6,8.6 Z" fill="none" stroke="#303848" stroke-width="0.7"/></g>
<g transform="translate(540.9,47.1) scale(0.95)"><path d="M2.4,3.4 C4,1.4 5,3.6 6.6,2.4 C7.6,1.6 8,0.8 8.6,0.6" fill="none" stroke="#18a0b8" stroke-width="0.8"/><path d="M1,7.6 C3,4.6 8,4.6 10.6,7 L10.6,8.4 C8,6.4 3,6.4 1,9 Z" fill="#30d0e8"/><path d="M1,9.6 C3.4,7.4 8,7.4 10.6,9.6" fill="none" stroke="#f0e040" stroke-width="1.1"/><path d="M1,10.8 C3.4,8.8 8,8.8 10.6,11" fill="none" stroke="#2860e0" stroke-width="1"/></g>
<g transform="translate(556.3,47.1) scale(0.95)"><path d="M1.4,3 L6,1 L10.6,3.4 L9.4,6 L10.4,9 L7.4,7.6 L6.6,11 L4,8 L1.6,9.4 L2.6,5.6 Z" fill="#1c5ccc"/><path d="M3,4.6 C5,3 8,3.4 9,5.4 M3.6,7 C5.4,5.6 7.4,6 8.6,7.6" fill="none" stroke="#40e0f0" stroke-width="1.2"/><path d="M4.4,3 L7.6,3.4" stroke="#f0e040" stroke-width="0.9"/></g>
<g transform="translate(570.9,47.1) scale(0.95)"><path d="M0.8,8.4 C2,3.4 6.6,1.4 10.4,2.6 L11.2,4.6 C7.6,3.6 4.4,5.6 3.6,10 Z" fill="#30d0e8"/><path d="M2.6,6.4 C4.6,3.6 7.6,2.6 10.8,3.4" fill="none" stroke="#b0f4fc" stroke-width="0.9"/><path d="M0.8,8.4 L3.6,10" stroke="#2050d0" stroke-width="1.2"/><path d="M10.4,2.6 L11.2,4.6" stroke="#2050d0" stroke-width="0.8"/></g>
<g transform="translate(590.9,47.1) scale(0.95)"><circle cx="6" cy="6" r="4.6" fill="none" stroke="#1c78b8" stroke-width="1"/><circle cx="6" cy="6" r="4" fill="none" stroke="#70d8f4" stroke-width="0.5"/></g>
<g transform="translate(606.3,47.1) scale(0.95)"><path d="M2,10.4 C1.4,8.4 2.4,7 4.4,6.4 C6.4,6 7,7.6 8.4,7.4 C10.4,7 10.8,4 9,2.6 C7.4,1.4 5,2 4.4,3.6" fill="none" stroke="#2a70d8" stroke-width="1.1"/><circle cx="2" cy="10.4" r="0.8" fill="#2040c0"/><circle cx="4.4" cy="3.6" r="0.8" fill="#2040c0"/></g>
<path d="M500.2,58.1 L503.4,58.1 L501.8,59.9 Z" fill="#101010"/>
<path d="M515.8,58.1 L519.0,58.1 L517.4,59.9 Z" fill="#101010"/>
<path d="M531.6,58.1 L534.8,58.1 L533.2,59.9 Z" fill="#101010"/>
<path d="M551.2,58.1 L554.4,58.1 L552.8,59.9 Z" fill="#101010"/>
<path d="M581.6,58.1 L584.8,58.1 L583.2,59.9 Z" fill="#101010"/>
<path d="M601.4,58.1 L604.6,58.1 L603.0,59.9 Z" fill="#101010"/>
<path d="M616.8,58.1 L620.0,58.1 L618.4,59.9 Z" fill="#101010"/>
<rect x="535.5" y="45.5" width="0.8" height="14.5" fill="#a8a8ba"/><rect x="536.3" y="45.5" width="0.8" height="14.5" fill="#f4f4fb"/>
<rect x="585.5" y="45.5" width="0.8" height="14.5" fill="#a8a8ba"/><rect x="586.3" y="45.5" width="0.8" height="14.5" fill="#f4f4fb"/>
<rect x="3.0" y="421" width="1.1" height="9" fill="#f6f6fc"/><rect x="4.1" y="421.3" width="0.7" height="9" fill="#a4a4b6"/>
<g transform="translate(9.9,422.9) scale(0.95)"><path d="M2,0.8 L8,0.8 L10.6,3.4 L10.6,11.2 L2,11.2 Z" fill="#fbfad0"/><path d="M8,0.8 L8,3.4 L10.6,3.4 Z" fill="#c8c6a0"/><path d="M10.6,3.6 L10.6,11.4 L2.2,11.4" fill="none" stroke="#909090" stroke-width="0.6"/></g>
<g transform="translate(24.1,422.9) scale(0.95)"><path d="M0.8,3.4 L4,3.4 L5,4.6 L9.4,4.6 L9.4,10.6 L0.8,10.6 Z" fill="#c89018"/><path d="M2.4,6 L11.4,6 L9.4,10.6 L0.8,10.6 Z" fill="#f8c838"/><path d="M6.6,2.6 C7.6,1 9.4,1 10.4,2.4 M10.4,2.4 L10.6,1 M10.4,2.4 L9,2.4" fill="none" stroke="#404040" stroke-width="0.6"/></g>
<g transform="translate(38.5,422.9) scale(0.95)"><rect x="0.8" y="0.8" width="10.4" height="10.4" fill="#808010"/><rect x="2.6" y="0.8" width="6.8" height="4.2" fill="#f4f4f4"/><rect x="3" y="7" width="6" height="4.2" fill="#202020"/><rect x="4" y="7.8" width="1.6" height="2.8" fill="#e8e8e8"/><rect x="0.8" y="0.8" width="10.4" height="10.4" fill="none" stroke="#202008" stroke-width="0.6"/></g>
<g transform="translate(53.1,422.9) scale(0.95)"><path d="M3.4,4.4 L5,1 L10.4,1 L9.4,4.4 Z" fill="#70d8f0"/><path d="M0.8,6.6 L3,4.2 L11.2,4.2 L10,6.6 Z" fill="#e0dc90"/><path d="M0.8,6.6 L10,6.6 L10,10.6 L0.8,10.6 Z" fill="#b0aa50"/><path d="M10,6.6 L11.2,4.2 L11.2,8.4 L10,10.6 Z" fill="#807c30"/><path d="M2,8.6 L8.6,8.6" stroke="#404020" stroke-width="0.8"/></g>
<g transform="translate(67.5,422.9) scale(0.95)"><path d="M3.6,0.8 L6.8,8 M8.4,0.8 L5.2,8" stroke="#283848" stroke-width="1.1"/><circle cx="4" cy="9.4" r="1.7" fill="none" stroke="#2058d8" stroke-width="1.1"/><circle cx="8" cy="9.4" r="1.7" fill="none" stroke="#2058d8" stroke-width="1.1"/></g>
<g transform="translate(82.3,422.9) scale(0.95)"><path d="M1,1 L5.4,1 L7,2.6 L7,8 L1,8 Z" fill="#fcfcfc"/><path d="M1,1 L5.4,1 L7,2.6 L7,8 L1,8 Z" fill="none" stroke="#808090" stroke-width="0.6"/><path d="M4.6,3.6 L9,3.6 L11,5.6 L11,11.2 L4.6,11.2 Z" fill="#fcfcfc"/><path d="M4.6,3.6 L9,3.6 L11,5.6 L11,11.2 L4.6,11.2 Z" fill="none" stroke="#707080" stroke-width="0.6"/><path d="M6,6.4 L9.6,6.4 M6,8 L9.6,8 M6,9.6 L9.6,9.6" stroke="#3060d0" stroke-width="0.7"/><path d="M2.2,3.4 L5.4,3.4 M2.2,5 L4,5" stroke="#3060d0" stroke-width="0.6"/></g>
<g transform="translate(96.7,422.9) scale(0.95)"><path d="M1,2 L8.6,2 L8.6,9.6 L1,9.6 Z" fill="#a88c30"/><rect x="3" y="0.8" width="3.6" height="2.2" fill="#505050"/><path d="M2,3.4 L7.6,3.4 L7.6,8.4 L2,8.4 Z" fill="#d8c880"/><path d="M5.6,6 L9.6,6 L11.2,7.6 L11.2,11.4 L5.6,11.4 Z" fill="#fcfcfc"/><path d="M5.6,6 L9.6,6 L11.2,7.6 L11.2,11.4 L5.6,11.4 Z" fill="none" stroke="#606070" stroke-width="0.5"/><path d="M7,8.4 L10,8.4 M7,10 L10,10" stroke="#3060d0" stroke-width="0.7"/></g>
<g transform="translate(111.3,422.9) scale(0.95)"><path d="M3,5 C5.6,2.4 9.4,3.4 9.6,6.6 C9.6,8.6 8.6,9.8 7,10.6" fill="none" stroke="#18a070" stroke-width="1.8"/><path d="M0.8,4.2 L5.4,2 L5,7 Z" fill="#18a070"/><path d="M3.4,4.6 C5.6,3 8.8,3.8 9,6.4" fill="none" stroke="#70e0b0" stroke-width="0.6"/></g>
<g transform="translate(127.3,422.9) scale(0.95)"><path d="M9,5 C6.4,2.4 2.6,3.4 2.4,6.6 C2.4,8.6 3.4,9.8 5,10.6" fill="none" stroke="#c0c0cc" stroke-width="1.8"/><path d="M11.2,4.2 L6.6,2 L7,7 Z" fill="#c0c0cc"/></g>
<g transform="translate(142.3,422.9) scale(0.95)"><path d="M0.8,1.8 L0.8,8.6 L2.6,7 L4,10 L5.2,9.4 L3.8,6.6 L6,6.4 Z" fill="#f8f080"/><path d="M0.8,1.8 L0.8,8.6 L2.6,7 L4,10 L5.2,9.4 L3.8,6.6 L6,6.4 Z" fill="none" stroke="#303030" stroke-width="0.5"/><path d="M6,3.4 C6.2,0.6 11,0.6 10.8,3.6 C10.6,5.6 8.6,5.4 8.6,7.6" fill="none" stroke="#1828b0" stroke-width="1.7"/><circle cx="8.6" cy="10" r="1.1" fill="#1828b0"/></g>
<g transform="translate(181.9,422.9) scale(0.95)"><path d="M1,5.4 C1,1.4 11,1.4 11,5.4 C11,8.4 7.4,9.2 5,8.8 L1.8,11 L2.8,8 C1.6,7.4 1,6.4 1,5.4 Z" fill="#f0f0f4"/><path d="M1,5.4 C1,1.4 11,1.4 11,5.4 C11,8.4 7.4,9.2 5,8.8 L1.8,11 L2.8,8 C1.6,7.4 1,6.4 1,5.4 Z" fill="none" stroke="#181818" stroke-width="0.9"/><circle cx="6" cy="5.2" r="1.8" fill="none" stroke="#505060" stroke-width="0.7"/></g>
<g transform="translate(194.9,422.9) scale(0.95)"><rect x="4.4" y="2" width="3.2" height="8.4" rx="1.4" fill="#e4e4ee"/><rect x="4.4" y="2" width="3.2" height="8.4" rx="1.4" fill="none" stroke="#b4b4c4" stroke-width="0.6"/><circle cx="6" cy="4.4" r="0.8" fill="#b4b4c4"/><circle cx="6" cy="7.6" r="0.8" fill="#b4b4c4"/></g>
<g transform="translate(207.9,422.9) scale(0.95)"><rect x="0.8" y="1.4" width="10.4" height="9.6" fill="#383848"/><rect x="0.8" y="1.4" width="10.4" height="2.2" fill="#1838d8"/><path d="M0.8,6 L11.2,6 M0.8,8.4 L11.2,8.4 M4.2,3.6 L4.2,11 M7.8,3.6 L7.8,11" stroke="#686878" stroke-width="0.5"/></g>
<g transform="translate(223.9,422.9) scale(0.95)"><path d="M3.6,6 L8.6,2 M3.6,6 L8.6,6 M3.6,6 L8.6,10" stroke="#383848" stroke-width="0.7"/><circle cx="2.6" cy="6" r="1.8" fill="#f0c838"/><circle cx="2.6" cy="6" r="1.8" fill="none" stroke="#806010" stroke-width="0.5"/><circle cx="9.2" cy="2" r="1.6" fill="#3878f0"/><circle cx="9.2" cy="6" r="1.6" fill="#3878f0"/><circle cx="9.2" cy="10" r="1.6" fill="#3878f0"/></g>
<g transform="translate(237.9,422.9) scale(0.95)"><path d="M3.6,5.4 L3.6,3.6 C3.6,0.6 8.4,0.6 8.4,3.6 L8.4,5.4" fill="none" stroke="#484850" stroke-width="1.3"/><rect x="1.8" y="5" width="8.4" height="6.2" rx="0.8" fill="#787880"/><rect x="2.8" y="5.8" width="2.6" height="4.6" fill="#b8b8c0"/><rect x="6.6" y="5.8" width="2.4" height="4.6" fill="#484850"/></g>
<g transform="translate(252.9,422.9) scale(0.95)"><rect x="1.4" y="1" width="3.2" height="10" fill="#909860"/><rect x="1.8" y="1.8" width="2.4" height="2" fill="#30c8e0"/><rect x="1.8" y="5" width="2.4" height="2" fill="#f0e040"/><rect x="1.8" y="8.2" width="2.4" height="2" fill="#30c8e0"/><path d="M5.4,1.6 C7,1.6 6.4,5.6 8,6 C6.4,6.4 7,10.4 5.4,10.4" fill="none" stroke="#484850" stroke-width="0.8"/><rect x="9" y="5" width="1.6" height="2" fill="#b8b8c8"/></g>
<g transform="translate(277.9,422.9) scale(0.95)"><path d="M0.8,2.4 L4.6,5.6 L9.6,3.4 L11,4.4 L6.6,7 L8,10.6 L6.6,10.8 L4.4,8 L1.6,9 L3.4,6.6 L0.6,3.2 Z" fill="#30a8e8"/><path d="M0.8,2.4 L4.6,5.6 L9.6,3.4" fill="none" stroke="#106098" stroke-width="0.6"/></g>
<g transform="translate(292.3,422.9) scale(0.95)"><rect x="0.8" y="0.8" width="10.4" height="10.4" fill="#f4f090"/><path d="M6,2 L6,10 M2,6 L10,6" stroke="#181818" stroke-width="1"/><path d="M2.4,2.4 L4.4,4.4 M9.6,2.4 L7.6,4.4 M2.4,9.6 L4.4,7.6 M9.6,9.6 L7.6,7.6" stroke="#181818" stroke-width="0.9"/><path d="M0.8,0.8 L3,0.8 L0.8,3 Z M11.2,0.8 L9,0.8 L11.2,3 Z M0.8,11.2 L3,11.2 L0.8,9 Z M11.2,11.2 L9,11.2 L11.2,9 Z" fill="#30b0d0"/></g>
<g transform="translate(306.9,422.9) scale(0.95)"><path d="M6,0.6 L7.8,3 L4.2,3 Z M6,11.4 L7.8,9 L4.2,9 Z M0.6,6 L3,4.2 L3,7.8 Z M11.4,6 L9,4.2 L9,7.8 Z" fill="#1838a8"/><path d="M6,2.6 L6,9.4 M2.6,6 L9.4,6" stroke="#1838a8" stroke-width="1.4"/><circle cx="6" cy="6" r="1" fill="#c8d8ff"/></g>
<g transform="translate(321.9,422.9) scale(0.95)"><path d="M1.6,7 C1.6,3 10.4,3 10.6,7 C10.4,10.4 1.6,10.4 1.6,7 Z" fill="#38a0e8"/><path d="M2,4.6 L5.6,3.4 L9,4 L10.6,5.6 L8.6,6.6 L4.4,6.4 Z" fill="#f4c8a0"/><path d="M1,5 C2,2.4 5,1.6 7,2.4" fill="none" stroke="#484860" stroke-width="0.8"/><path d="M2,4.6 L5.6,3.4 L9,4 L10.6,5.6" fill="none" stroke="#a06840" stroke-width="0.5"/></g>
<g transform="translate(336.7,422.9) scale(0.95)"><circle cx="4.6" cy="4.6" r="3.4" fill="#f4f8ff"/><circle cx="4.6" cy="4.6" r="3.4" fill="none" stroke="#1c70b8" stroke-width="1.1"/><path d="M7.2,7.2 L10.8,10.8" stroke="#283868" stroke-width="1.7"/><path d="M2.8,4.6 L6.4,4.6 M4.6,2.8 L4.6,6.4" stroke="#101010" stroke-width="1"/></g>
<g transform="translate(351.3,422.9) scale(0.95)"><circle cx="4.6" cy="4.6" r="3.4" fill="#f4f8ff"/><circle cx="4.6" cy="4.6" r="3.4" fill="none" stroke="#1c70b8" stroke-width="1.1"/><path d="M7.2,7.2 L10.8,10.8" stroke="#486890" stroke-width="1.7"/><path d="M2.8,4.6 L6.4,4.6" stroke="#101010" stroke-width="1"/></g>
<g transform="translate(365.9,422.9) scale(0.95)"><path d="M0.8,9.6 L5,6.6 L11.4,8 L7,11.2 Z" fill="#30b8d0"/><path d="M0.8,9.6 L5,6.6 L11.4,8 L7,11.2 Z" fill="none" stroke="#0c6078" stroke-width="0.5"/><path d="M6,8.6 L6,2" stroke="#d09040" stroke-width="1"/><path d="M4.6,3.6 L6,0.8 L7.4,3.6 Z" fill="#e8a850"/></g>
<g transform="translate(379.9,422.9) scale(0.95)"><rect x="0.8" y="1" width="10.4" height="10" fill="#1848d0"/><rect x="1.6" y="1.8" width="4" height="3.8" fill="#38d8f0"/><rect x="6.4" y="1.8" width="4" height="3.8" fill="#38a0f0"/><rect x="1.6" y="6.4" width="4" height="3.8" fill="#38a0f0"/><rect x="6.4" y="6.4" width="4" height="3.8" fill="#38d8f0"/></g>
<g transform="translate(394.3,422.9) scale(0.95)"><path d="M1,4 L4,1 L11,1 L11,8 L8,11 L1,11 Z" fill="#38c8f8"/><path d="M1,4 L8,4 L8,11 L1,11 Z" fill="#60e0ff"/><path d="M1,4 L4,1 L11,1 L8,4 Z" fill="#a0f0ff"/><path d="M1,4 L4,1 L11,1 L11,8 L8,11 L1,11 Z M1,4 L8,4 L8,11 M8,4 L11,1" fill="none" stroke="#1868d8" stroke-width="0.7"/></g>
<g transform="translate(410.3,422.9) scale(0.95)"><path d="M2,2.6 C2,0.2 10,0.2 10,2.6 L10,9.4 C10,11.8 2,11.8 2,9.4 Z" fill="#b8a050"/><path d="M3.4,3.4 L8.6,3.4 L8.6,10 C8.6,11 3.4,11 3.4,10 Z" fill="#1838c8"/><ellipse cx="6" cy="2.8" rx="3" ry="1.2" fill="#30c8e8"/><path d="M2,2.6 C2,0.2 10,0.2 10,2.6 L10,9.4 C10,11.8 2,11.8 2,9.4 Z" fill="none" stroke="#504010" stroke-width="0.6"/></g>
<g transform="translate(425.3,422.9) scale(0.95)"><rect x="0.8" y="1" width="10.4" height="10" fill="#30c8e0"/><rect x="0.8" y="1" width="10.4" height="10" fill="none" stroke="#606878" stroke-width="0.7"/><path d="M2,7.6 C4,4.6 7,4 10,5.6 L9,8 C7,7 4.6,7.6 3.4,9.6 Z" fill="#d8c060"/><path d="M2,7.6 C4,4.6 7,4 10,5.6" fill="none" stroke="#2048c0" stroke-width="0.8"/></g>
<g transform="translate(439.9,422.9) scale(0.95)"><rect x="0.8" y="1" width="10.4" height="10" fill="#48d0e8"/><rect x="0.8" y="1" width="10.4" height="10" fill="none" stroke="#606878" stroke-width="0.7"/><path d="M2.6,8.6 C4,6 7,5.6 9.6,6.6 L8.6,8.4 C7,7.8 5,8.2 4,9.8 Z" fill="#c8b050"/><path d="M2.6,8.6 C4,6 7,5.6 9.6,6.6" fill="none" stroke="#2048c0" stroke-width="0.8"/></g>
<g transform="translate(467.9,422.9) scale(0.95)"><path d="M1.4,7 L1.4,10 C1.4,11.4 10.6,11.4 10.6,10 L10.6,7 Z" fill="#e8e8f0"/><ellipse cx="6" cy="7" rx="4.6" ry="1.6" fill="#f8f8fc"/><path d="M1.4,7 L1.4,10 C1.4,11.4 10.6,11.4 10.6,10 L10.6,7 C10.6,5 1.4,5 1.4,7 C1.4,9 10.6,9 10.6,7" fill="none" stroke="#282830" stroke-width="0.7"/><path d="M3.4,3.4 C5,1 8.6,1.4 9.4,4.6" fill="none" stroke="#2040c8" stroke-width="1.1"/><path d="M8.2,4.2 L9.6,5.6 L10.6,3.6 Z" fill="#2040c8"/><circle cx="2.8" cy="2.8" r="1.4" fill="#30c8e8"/></g>
<g transform="translate(493.3,422.9) scale(0.95)"><path d="M1.4,3 L10.6,3" stroke="#2038d0" stroke-width="0.9"/><path d="M0.6,3 L2.6,1.6 L2.6,4.4 Z M11.4,3 L9.4,1.6 L9.4,4.4 Z" fill="#2038d0"/><rect x="0.8" y="6.6" width="10.4" height="3.8" fill="#f4a890"/><rect x="0.8" y="6.6" width="10.4" height="3.8" fill="none" stroke="#2038d0" stroke-width="0.7"/><path d="M3,7.4 L3,9.6 M5,7.4 L5,9.6 M7,7.4 L7,9.6 M9,7.4 L9,9.6" stroke="#2038d0" stroke-width="0.6"/></g>
<g transform="translate(508.3,422.9) scale(0.95)"><path d="M4,1.4 L9.6,1.4 L9.6,10.6 L6.6,10.6 L6.6,8.4 L4,8.4 Z" fill="#404048"/><path d="M5,2.6 L8.6,2.6 L8.6,7 L5,7 Z" fill="#707078"/><circle cx="3.2" cy="4.4" r="2" fill="#30d0f0"/><circle cx="3.2" cy="4.4" r="2" fill="none" stroke="#206040" stroke-width="0.6"/><circle cx="3" cy="4.2" r="0.8" fill="#f0f060"/></g>
<g transform="translate(521.9,422.9) scale(0.95)"><rect x="4.8" y="1" width="2.4" height="2.6" fill="#a08820"/><path d="M3.6,3.6 L8.4,3.6 L9,10.8 L3,10.8 Z" fill="#c8a828"/><path d="M4.4,4.4 L5.4,4.4 L5.2,10 L4,10 Z" fill="#f0d860"/><path d="M3.6,3.6 L8.4,3.6 L9,10.8 L3,10.8 Z" fill="none" stroke="#504008" stroke-width="0.5"/></g>
<g transform="translate(546.9,422.9) scale(0.95)"><rect x="0.8" y="3.6" width="10.4" height="6.4" rx="0.8" fill="#30303c"/><rect x="3.6" y="2.2" width="3.6" height="1.8" fill="#30303c"/><circle cx="6" cy="6.8" r="2.3" fill="#787888"/><circle cx="6" cy="6.8" r="1.2" fill="#181820"/><rect x="1.6" y="4.4" width="1.6" height="1" fill="#b8b8c8"/><rect x="8.8" y="4.4" width="1.6" height="1" fill="#b8b8c8"/></g>
<g transform="translate(570.9,422.9) scale(0.95)"><rect x="1.6" y="2.4" width="6.6" height="6.6" fill="#e4e4ee"/><rect x="1.6" y="2.4" width="6.6" height="6.6" fill="none" stroke="#b4b4c4" stroke-width="0.7"/><path d="M9.6,1.4 L9.6,10.8 M0.8,10.4 L10.4,10.4 M1.6,4.4 L8.2,4.4 M4.6,2.4 L4.6,9" stroke="#b4b4c4" stroke-width="0.7"/></g>
<g transform="translate(585.3,422.9) scale(0.95)"><rect x="1.6" y="2.6" width="7" height="8" fill="#40d8f0"/><rect x="1.6" y="2.6" width="7" height="8" fill="none" stroke="#185868" stroke-width="0.8"/><path d="M1.4,1.2 L8.8,1.2 M10.2,2.6 L10.2,10.6" stroke="#303038" stroke-width="0.7"/><path d="M9.6,3.4 L10.8,3.4 M9.6,9.8 L10.8,9.8" stroke="#a09020" stroke-width="0.8"/></g>
<g transform="translate(611.3,422.9) scale(0.95)"><text x="4" y="5.6" font-family="Liberation Sans,sans-serif" font-size="4.6" font-weight="bold" fill="#28287a">ABC</text><path d="M3.4,6.6 L11.4,6.6" stroke="#28287a" stroke-width="0.5"/><path d="M1,10.4 L4,7.4 L4,10.4 Z" fill="#2038b0"/><path d="M1,10.4 L5,10.4" stroke="#2038b0" stroke-width="0.8"/></g>
<g transform="translate(635.3,422.9) scale(0.95)"><path d="M3,3 L7,1 L11,2.6 L11,8.4 L7,10.8 L3,9 Z" fill="#a8a8c4"/><path d="M1.4,4.6 L5,3.4 L8,5.6 L6,10.8 L2.4,9 Z" fill="#2890f0"/><path d="M3,5.6 L5.6,7.6 L4.4,10" fill="none" stroke="#90e0ff" stroke-width="0.8"/><path d="M6.6,3 L9.6,4 L9,7.6" fill="none" stroke="#e04848" stroke-width="0.9"/></g>
<g transform="translate(662.3,422.9) scale(0.95)"><path d="M1.4,10.6 L1.4,3.4 L4,1.4 L9,1.4" fill="none" stroke="#30c0d8" stroke-width="1"/><path d="M1.4,10.6 L7,10.6" stroke="#30c0d8" stroke-width="1"/><circle cx="6.6" cy="5.2" r="3" fill="none" stroke="#2848d8" stroke-width="1"/><path d="M3.6,7.6 L10,2.4" stroke="#d82828" stroke-width="0.9"/><circle cx="10" cy="2.4" r="1" fill="#f0d040"/><circle cx="5.4" cy="4.4" r="0.9" fill="#d82828"/></g>
<g transform="translate(686.9,422.9) scale(0.95)"><path d="M1.4,4 C1.4,1.6 10.6,1.6 10.6,4 L9.6,8.6 C9,11.4 3,11.4 2.4,8.6 Z" fill="#e88020"/><path d="M3,4.4 C4,3 8,3 9,4.4 L8.4,8 C7.6,9.6 4.4,9.6 3.6,8 Z" fill="#f8c880"/><path d="M4.4,3 L6,8.4 M7.4,2.4 L6.6,8" stroke="#a04808" stroke-width="0.8"/><circle cx="8.6" cy="2.6" r="1.2" fill="#fff0d0"/></g>
<text x="166.4" y="432" font-family="Liberation Serif,serif" font-style="italic" font-weight="bold" font-size="10" fill="#101010">f</text><text x="170.4" y="432.2" font-family="Liberation Sans,sans-serif" font-size="5.4" font-weight="bold" fill="#101010">(x)</text>
<path d="M121.8,434.1 L125.0,434.1 L123.4,435.9 Z" fill="#101010"/>
<path d="M137.8,434.1 L141.0,434.1 L139.4,435.9 Z" fill="#101010"/>
<path d="M218.8,434.1 L222.0,434.1 L220.4,435.9 Z" fill="#101010"/>
<path d="M248.8,434.1 L252.0,434.1 L250.4,435.9 Z" fill="#101010"/>
<path d="M405.4,434.1 L408.6,434.1 L407.0,435.9 Z" fill="#101010"/>
<path d="M421.2,434.1 L424.4,434.1 L422.8,435.9 Z" fill="#101010"/>
<path d="M621.2,434.1 L624.4,434.1 L622.8,435.9 Z" fill="#101010"/>
<path d="M646.4,434.1 L649.6,434.1 L648.0,435.9 Z" fill="#101010"/>
<path d="M672.2,434.1 L675.4,434.1 L673.8,435.9 Z" fill="#101010"/>
<rect x="161.4" y="421" width="1.1" height="9" fill="#f6f6fc"/><rect x="162.5" y="421.3" width="0.7" height="9" fill="#a4a4b6"/>
<rect x="272.4" y="421" width="1.1" height="9" fill="#f6f6fc"/><rect x="273.5" y="421.3" width="0.7" height="9" fill="#a4a4b6"/>
<rect x="461.0" y="421" width="1.1" height="9" fill="#f6f6fc"/><rect x="462.1" y="421.3" width="0.7" height="9" fill="#a4a4b6"/>
<rect x="487.0" y="421" width="1.1" height="9" fill="#f6f6fc"/><rect x="488.1" y="421.3" width="0.7" height="9" fill="#a4a4b6"/>
<rect x="540.4" y="421" width="1.1" height="9" fill="#f6f6fc"/><rect x="541.5" y="421.3" width="0.7" height="9" fill="#a4a4b6"/>
<rect x="565.4" y="421" width="1.1" height="9" fill="#f6f6fc"/><rect x="566.5" y="421.3" width="0.7" height="9" fill="#a4a4b6"/>
<rect x="604.0" y="421" width="1.1" height="9" fill="#f6f6fc"/><rect x="605.1" y="421.3" width="0.7" height="9" fill="#a4a4b6"/>
<rect x="628.8" y="421" width="1.1" height="9" fill="#f6f6fc"/><rect x="629.9" y="421.3" width="0.7" height="9" fill="#a4a4b6"/>
<rect x="655.0" y="421" width="1.1" height="9" fill="#f6f6fc"/><rect x="656.1" y="421.3" width="0.7" height="9" fill="#a4a4b6"/>
<rect x="680.8" y="421" width="1.1" height="9" fill="#f6f6fc"/><rect x="681.9" y="421.3" width="0.7" height="9" fill="#a4a4b6"/>
<rect x="783.2" y="64.4" width="8.199999999999932" height="1.1" fill="#f6f6fc"/><rect x="783.5" y="65.5" width="8.199999999999932" height="0.7" fill="#a4a4b6"/>
<rect x="783.2" y="88.0" width="8.199999999999932" height="1.1" fill="#f6f6fc"/><rect x="783.5" y="89.1" width="8.199999999999932" height="0.7" fill="#a4a4b6"/>
<rect x="783.2" y="156.4" width="8.199999999999932" height="1.1" fill="#f6f6fc"/><rect x="783.5" y="157.5" width="8.199999999999932" height="0.7" fill="#a4a4b6"/>
<rect x="783.2" y="195.8" width="8.199999999999932" height="1.1" fill="#f6f6fc"/><rect x="783.5" y="196.9" width="8.199999999999932" height="0.7" fill="#a4a4b6"/>
<rect x="783.2" y="220.4" width="8.199999999999932" height="1.1" fill="#f6f6fc"/><rect x="783.5" y="221.5" width="8.199999999999932" height="0.7" fill="#a4a4b6"/>
<rect x="783.2" y="246.8" width="8.199999999999932" height="1.1" fill="#f6f6fc"/><rect x="783.5" y="247.9" width="8.199999999999932" height="0.7" fill="#a4a4b6"/>
<rect x="783.2" y="332.4" width="8.199999999999932" height="1.1" fill="#f6f6fc"/><rect x="783.5" y="333.5" width="8.199999999999932" height="0.7" fill="#a4a4b6"/>
<rect x="783.2" y="356.0" width="8.199999999999932" height="1.1" fill="#f6f6fc"/><rect x="783.5" y="357.1" width="8.199999999999932" height="0.7" fill="#a4a4b6"/>
<rect x="783.2" y="407.2" width="8.199999999999932" height="1.1" fill="#f6f6fc"/><rect x="783.5" y="408.3" width="8.199999999999932" height="0.7" fill="#a4a4b6"/>
<g transform="translate(785.1,69.9) scale(0.95)"><path d="M0,11.8 L3.6,4.4 L7.4,9.4 Z" fill="#f0a050"/><path d="M10,1.6 L12.6,0.4 L12.4,8.4 L8.6,10.4 Z" fill="#f0a050"/><path d="M0.6,3 L4.6,0.6 L12,5 L8.4,10.6 L1.8,7.6 Z" fill="#26262c"/><path d="M2,3.4 L4.6,2 L7.4,3.8 L5.6,6.6 L2.6,5.6 Z" fill="#f2f2f4"/><path d="M7.6,5.4 L10.6,5.8 L8.6,8.8 L6.4,8 Z" fill="#e4e4e8"/><path d="M4.2,7.4 L6,8.2 L7.6,5.4" fill="none" stroke="#8a8a90" stroke-width="0.6"/></g>
<g transform="translate(785.1,95.3) scale(0.95)"><path d="M1.6,4 L6,2.4 L11,4 L11,9.6 L6.6,11.4 L1.6,9.6 Z" fill="#e6e6f0"/><path d="M1.6,4 L6.6,5.8 L11,4 M6.6,5.8 L6.6,11.4 M1.6,4 L6,2.4 L11,4 L11,9.6 L6.6,11.4 L1.6,9.6 Z" fill="none" stroke="#a6a6ba" stroke-width="0.8"/><path d="M1,1 L4.6,0.6 L5.4,2.4 L2,3.2 Z" fill="#dcdce8" stroke="#a6a6ba" stroke-width="0.6"/><path d="M3,6.6 L5.2,7.4 L5.2,9.6 L3,8.8 Z M8,7 L10,6.2 L10,8.4 L8,9.2 Z" fill="#f6f6fa" stroke="#b4b4c6" stroke-width="0.5"/></g>
<g transform="translate(785.1,109.5) scale(0.95)"><path d="M1.6,4 L6,2.4 L11,4 L11,9.6 L6.6,11.4 L1.6,9.6 Z" fill="#e6e6f0"/><path d="M1.6,4 L6.6,5.8 L11,4 M6.6,5.8 L6.6,11.4 M1.6,4 L6,2.4 L11,4 L11,9.6 L6.6,11.4 L1.6,9.6 Z" fill="none" stroke="#a6a6ba" stroke-width="0.8"/><path d="M1,1 L4.6,0.6 L5.4,2.4 L2,3.2 Z" fill="#dcdce8" stroke="#a6a6ba" stroke-width="0.6"/><path d="M3,6.6 L5.2,7.4 L5.2,9.6 L3,8.8 Z M8,7 L10,6.2 L10,8.4 L8,9.2 Z" fill="#f6f6fa" stroke="#b4b4c6" stroke-width="0.5"/></g>
<g transform="translate(785.1,123.9) scale(0.95)"><path d="M1.6,4 L6,2.4 L11,4 L11,9.6 L6.6,11.4 L1.6,9.6 Z" fill="#e6e6f0"/><path d="M1.6,4 L6.6,5.8 L11,4 M6.6,5.8 L6.6,11.4 M1.6,4 L6,2.4 L11,4 L11,9.6 L6.6,11.4 L1.6,9.6 Z" fill="none" stroke="#a6a6ba" stroke-width="0.8"/><path d="M1,1 L4.6,0.6 L5.4,2.4 L2,3.2 Z" fill="#dcdce8" stroke="#a6a6ba" stroke-width="0.6"/><path d="M3,6.6 L5.2,7.4 L5.2,9.6 L3,8.8 Z M8,7 L10,6.2 L10,8.4 L8,9.2 Z" fill="#f6f6fa" stroke="#b4b4c6" stroke-width="0.5"/></g>
<g transform="translate(785.1,138.3) scale(0.95)"><path d="M1.6,4 L6,2.4 L11,4 L11,9.6 L6.6,11.4 L1.6,9.6 Z" fill="#e6e6f0"/><path d="M1.6,4 L6.6,5.8 L11,4 M6.6,5.8 L6.6,11.4 M1.6,4 L6,2.4 L11,4 L11,9.6 L6.6,11.4 L1.6,9.6 Z" fill="none" stroke="#a6a6ba" stroke-width="0.8"/><path d="M1,1 L4.6,0.6 L5.4,2.4 L2,3.2 Z" fill="#dcdce8" stroke="#a6a6ba" stroke-width="0.6"/><path d="M3,6.6 L5.2,7.4 L5.2,9.6 L3,8.8 Z M8,7 L10,6.2 L10,8.4 L8,9.2 Z" fill="#f6f6fa" stroke="#b4b4c6" stroke-width="0.5"/></g>
<g transform="translate(785.1,163.7) scale(0.95)"><path d="M2.4,0.8 L2.4,9.8 L4.8,7.8 L6.6,11.4 L8.2,10.6 L6.4,7.2 L9.6,7 Z" fill="#ffd8a0"/><path d="M2.4,0.8 L2.4,9.8 L4.8,7.8 L6.6,11.4 L8.2,10.6 L6.4,7.2 L9.6,7 Z" fill="none" stroke="#f07810" stroke-width="1.3" stroke-linejoin="round"/></g>
<g transform="translate(785.1,177.7) scale(0.95)"><path d="M1,1 L11,11 M11,1 L1,11" stroke="#16161c" stroke-width="1.5" stroke-dasharray="2.2 1"/><path d="M5,4.4 C7,3.4 8.6,5 8,7 C7.4,8.6 5.4,8.6 4.8,7.4 Z" fill="#30b8d0"/><path d="M6,5 C7,5 7.6,6 7,7" fill="none" stroke="#e8e060" stroke-width="1"/><circle cx="10.6" cy="10.6" r="0.9" fill="#16161c"/><circle cx="1.4" cy="1.4" r="0.9" fill="#16161c"/></g>
<g transform="translate(785.1,202.3) scale(0.95)"><rect x="1" y="3" width="8.4" height="7.6" fill="#f4f8ff"/><rect x="1" y="3" width="8.4" height="7.6" fill="none" stroke="#383848" stroke-width="0.9"/><path d="M3,9 L7,5 L10.6,1.4" stroke="#2848c8" stroke-width="1.1"/><path d="M2.4,9.6 L4.4,9 L3,7.6 Z" fill="#30c8e0"/><path d="M1,10.6 L9.4,10.6" stroke="#30c8e0" stroke-width="0.8"/></g>
<g transform="translate(785.1,226.7) scale(0.95)"><path d="M0.6,5 C2,1.4 9,0.6 11.4,4 C12,7 10,10.6 6.4,11 C3,11 0.4,8.4 0.6,5 Z" fill="#d8b088"/><path d="M1.4,4 C4,2 8,2.4 10.6,5" fill="none" stroke="#f0e040" stroke-width="1.3"/><path d="M2,6 C4.6,4.4 7.6,4.8 10,7.4" fill="none" stroke="#18181c" stroke-width="1.5"/><path d="M3,8 C5,7 7,7.4 8.6,9.4" fill="none" stroke="#c83020" stroke-width="1.1"/><circle cx="2.2" cy="9.6" r="0.8" fill="#f4f4f8"/><circle cx="9.6" cy="2" r="0.8" fill="#f4f4f8"/></g>
<g transform="translate(785.1,251.3) scale(0.95)"><path d="M2,6 C2,2 9,1.4 10.6,4.6" fill="none" stroke="#2868d8" stroke-width="1.6"/><path d="M2,6 C2.4,8 4,8.6 5.6,8" fill="none" stroke="#30c0e0" stroke-width="1.4"/><path d="M9,3 L11.4,5.4 L8.4,6 Z" fill="#2868d8"/><text x="4.6" y="11.4" font-family="Liberation Sans,sans-serif" font-size="4.4" font-weight="bold" fill="#1838a0">XN</text></g>
<g transform="translate(785.1,268.7) scale(0.95)"><circle cx="2.8" cy="2.8" r="1.3" fill="#2c2cc4"/><circle cx="2.8" cy="6.0" r="1.3" fill="#2c2cc4"/><circle cx="2.8" cy="9.2" r="1.3" fill="#2c2cc4"/><circle cx="6.0" cy="2.8" r="1.3" fill="#2c2cc4"/><circle cx="6.0" cy="6.0" r="1.3" fill="#2c2cc4"/><circle cx="6.0" cy="9.2" r="1.3" fill="#2c2cc4"/><circle cx="9.2" cy="2.8" r="1.3" fill="#2c2cc4"/><circle cx="9.2" cy="6.0" r="1.3" fill="#2c2cc4"/><circle cx="9.2" cy="9.2" r="1.3" fill="#2c2cc4"/></g>
<g transform="translate(785.1,284.3) scale(0.95)"><path d="M1.4,5 L6,3 L10.6,5 L10.6,9 L6,11 L1.4,9 Z" fill="#d8c050"/><path d="M1.4,5 L6,7 L10.6,5 M6,7 L6,11" fill="none" stroke="#605010" stroke-width="0.6"/><path d="M3,3.6 L6,1 L9.4,3 L7,5 Z" fill="#30c0e0"/><circle cx="4" cy="8.4" r="1.1" fill="#2850d0"/><path d="M7.4,7.6 L9.6,6.6" stroke="#f4f4f4" stroke-width="0.9"/></g>
<g transform="translate(785.1,299.9) scale(0.95)"><path d="M1.4,6 L6,4 L10.6,6 L10.6,9.4 L6,11.4 L1.4,9.4 Z" fill="#d8c050"/><path d="M1.4,6 L6,8 L10.6,6 M6,8 L6,11.4" fill="none" stroke="#605010" stroke-width="0.6"/><path d="M2.4,4 L7,1 L10.4,2.6 L6,5.6 Z" fill="#30c0e0"/><path d="M3,6.6 L9.6,1.6" stroke="#1838a8" stroke-width="1"/></g>
<g transform="translate(785.1,315.3) scale(0.95)"><path d="M1.4,5.6 L6,3.6 L10.6,5.6 L10.6,9.4 L6,11.4 L1.4,9.4 Z" fill="#e0cc70"/><path d="M1.4,5.6 L6,7.6 L10.6,5.6 M6,7.6 L6,11.4" fill="none" stroke="#605010" stroke-width="0.6"/><path d="M3,3 C3,0.6 7.4,0.6 7.4,3 L7.4,5" fill="none" stroke="#484850" stroke-width="0.9"/><rect x="3" y="8" width="2" height="1.6" fill="#303038"/></g>
<g transform="translate(785.1,338.7) scale(0.95)"><path d="M1.4,1 L1.4,10.6 L11,10.6" fill="none" stroke="#484858" stroke-width="0.8"/><path d="M1.4,10.6 C4,9 5,2.4 7,2.4 C9,2.4 9.6,7 11,10" fill="none" stroke="#2868d8" stroke-width="0.9"/><path d="M1.4,10.6 L10.6,4" stroke="#d0a020" stroke-width="0.7"/></g>
<g transform="translate(785.1,363.3) scale(0.95)"><path d="M1,7.6 C2.4,5 9.6,5 11,7.6 C9,10.4 3,10.4 1,7.6 Z" fill="#2878e0"/><path d="M3.6,6.4 L6,2.4 L8.4,6.4 Z" fill="#e05030"/><circle cx="6" cy="7.6" r="1.6" fill="#f08030"/><path d="M1,7.6 C2.4,5 9.6,5 11,7.6" fill="none" stroke="#80c8ff" stroke-width="0.7"/></g>
<g transform="translate(785.1,377.3) scale(0.95)"><path d="M0.8,10.6 C1,5.6 3.6,3 6,3 C8.4,3 11,5.6 11.2,10.6 C8,8.6 4,8.6 0.8,10.6 Z" fill="#30c8e8"/><path d="M2.6,8.4 C4.6,7 7.4,7 9.4,8.4" fill="none" stroke="#a0f0f8" stroke-width="1.4"/><path d="M6,0.8 L6,8" stroke="#202028" stroke-width="0.9"/><path d="M3,2.4 L9,2.4" stroke="#202028" stroke-width="1.1"/><path d="M0.8,10.6 C1,5.6 3.6,3 6,3 C8.4,3 11,5.6 11.2,10.6" fill="none" stroke="#1868d8" stroke-width="0.8"/></g>
<g transform="translate(785.1,391.1) scale(0.95)"><path d="M0.8,10.6 C2,6.6 4,5.4 6,5.4 C8,5.4 10,6.6 11.2,10.6 C8,9 4,9 0.8,10.6 Z" fill="#30c8e8"/><path d="M2,9.6 C4.6,8.4 7.4,8.4 10,9.6" fill="none" stroke="#a0f0f8" stroke-width="1"/><path d="M6,2 L6,7" stroke="#202028" stroke-width="0.8"/><path d="M2.6,2.4 L9.6,1.4" stroke="#202028" stroke-width="0.9"/><path d="M0.8,10.6 C2,6.6 4,5.4 6,5.4 C8,5.4 10,6.6 11.2,10.6" fill="none" stroke="#1868d8" stroke-width="0.8"/></g>
<path d="M796.0,173.7 L799.2,173.7 L797.6,175.5 Z" fill="#101010"/>
<path d="M796.0,187.7 L799.2,187.7 L797.6,189.5 Z" fill="#101010"/>
<path d="M796.0,212.5 L799.2,212.5 L797.6,214.3 Z" fill="#101010"/>
<path d="M796.0,261.3 L799.2,261.3 L797.6,263.1 Z" fill="#101010"/>
<path d="M796.0,278.9 L799.2,278.9 L797.6,280.7 Z" fill="#101010"/>
<path d="M796.0,294.5 L799.2,294.5 L797.6,296.3 Z" fill="#101010"/>
<path d="M796.0,310.1 L799.2,310.1 L797.6,311.9 Z" fill="#101010"/>
<path d="M796.0,325.5 L799.2,325.5 L797.6,327.3 Z" fill="#101010"/>
<path d="M794.6,411 L796,412.4 L797.4,411 M794.6,413.4 L796,414.8 L797.4,413.4" fill="none" stroke="#f4f4fa" stroke-width="0.7"/>
<path d="M782.6,420.6 L787.6,420.6 C789.4,420.8 789.6,422.6 788,423.4 L785.6,424.2 C788.6,424 789.2,426 787.4,427" fill="none" stroke="#e03818" stroke-width="1.1"/><path d="M782.2,424.6 L779.4,431.6 C783.6,431.8 786.4,429.6 786.2,426.6 C786,424.6 784,424.2 782.2,424.6 Z" fill="none" stroke="#6038a8" stroke-width="1.1"/><path d="M792,423.6 C789.6,423 787.6,424.6 789,426.4 C790.6,428 791.6,429.6 788.6,430.6 C787.4,431 786.4,430.8 785.6,430.4" fill="none" stroke="#f0a818" stroke-width="1.2"/>
<text x="781" y="435.6" font-family="Liberation Sans,sans-serif" font-style="italic" font-weight="bold" font-size="5" fill="#4a2a98" textLength="15.4" lengthAdjust="spacingAndGlyphs">CATIA</text>
<path d="M5.5,65.2 L7.9,70 L3.1,70 Z" fill="#050510"/>
<path d="M3.1,401.3 L7.9,401.3 L5.5,406.2 Z" fill="#050510"/>
<path d="M12.9,413.4 L17.6,411 L17.6,415.8 Z" fill="#050510"/>
<path d="M777.9,413.4 L773,411 L773,415.8 Z" fill="#050510"/>
<path d="M735.6,6 L740.4,6" stroke="#e8e8e8" stroke-width="0.7"/>
<rect x="759.4" y="4.4" width="3.6" height="3.6" fill="none" stroke="#e8e8e8" stroke-width="0.7"/><path d="M760.6,4.4 L760.6,3.4 L764.2,3.4 L764.2,7 L763,7" fill="none" stroke="#e8e8e8" stroke-width="0.7"/>
<path d="M784.2,3.8 L788.8,8.4 M788.8,3.8 L784.2,8.4" stroke="#e8e8e8" stroke-width="0.7"/>
<path d="M773,18.7 L776.2,18.7" stroke="#5874ac" stroke-width="1.1"/>
<rect x="782.8" y="16.6" width="2.6" height="2.6" fill="none" stroke="#5874ac" stroke-width="0.7"/><path d="M784,16.6 L784,15.2 L786.8,15.2 L786.8,17.8 L785.4,17.8" fill="none" stroke="#5874ac" stroke-width="0.7"/>
<path d="M793.4,15.4 L796.8,18.8 M796.8,15.4 L793.4,18.8" stroke="#4c6aa6" stroke-width="1"/>
<g transform="translate(0.9,1.9) scale(0.8400000000000001,0.8099999999999999)"><rect x="0" y="0" width="10" height="10" fill="#06060c"/><path d="M0.6,0.8 L2.6,1 L6.6,7.4 L7,9.6 L5,9.4 L2,4 Z" fill="#2c8cf0"/><path d="M1.4,1.4 L2.4,1.6 L6,7.6 L5.4,8.4 Z" fill="#8cd0ff"/><path d="M3.8,1.2 C5.6,1.8 6.6,2.8 7,4 C7.8,3.2 8.8,3.2 9.4,3.8 C8.8,5 9,6.8 7.8,8.2 C6.6,7 5,4.8 3.8,1.2 Z" fill="#f07010"/><path d="M4.8,2.4 C5.8,3.2 6.6,4.4 7,5.4 C7.4,4.8 8,4.6 8.4,4.6 C8.2,5.6 8,6.4 7.4,7 C6.4,5.6 5.4,4.2 4.8,2.4 Z" fill="#ffc840"/><path d="M5.8,3.8 C6.4,4.4 6.8,5.2 7.2,6 L6.8,6.2 Z" fill="#fff0b0"/><rect x="0.3" y="0.3" width="9.4" height="9.4" fill="none" stroke="#e8e8e8" stroke-width="0.6"/></g>
<g transform="translate(0.3,12.9) scale(0.9800000000000001,0.85)"><rect x="0" y="0" width="10" height="10" fill="#06060c"/><path d="M0.6,0.8 L2.6,1 L6.6,7.4 L7,9.6 L5,9.4 L2,4 Z" fill="#2c8cf0"/><path d="M1.4,1.4 L2.4,1.6 L6,7.6 L5.4,8.4 Z" fill="#8cd0ff"/><path d="M3.8,1.2 C5.6,1.8 6.6,2.8 7,4 C7.8,3.2 8.8,3.2 9.4,3.8 C8.8,5 9,6.8 7.8,8.2 C6.6,7 5,4.8 3.8,1.2 Z" fill="#f07010"/><path d="M4.8,2.4 C5.8,3.2 6.6,4.4 7,5.4 C7.4,4.8 8,4.6 8.4,4.6 C8.2,5.6 8,6.4 7.4,7 C6.4,5.6 5.4,4.2 4.8,2.4 Z" fill="#ffc840"/><path d="M5.8,3.8 C6.4,4.4 6.8,5.2 7.2,6 L6.8,6.2 Z" fill="#fff0b0"/></g>
<rect x="771.6" y="441.6" width="4" height="3.8" fill="none" stroke="#b4b4c6" stroke-width="0.7"/><path d="M776.6,441.4 L776.6,446" stroke="#b4b4c6" stroke-width="0.7"/>
<rect x="788.4" y="441.6" width="5.2" height="4" fill="none" stroke="#b4b4c6" stroke-width="0.7"/><circle cx="791" cy="443.5" r="0.9" fill="#b4b4c6"/>
<path d="M283.7,32.2 L285.6,34.1 L287.5,32.2" fill="none" stroke="#3c3c46" stroke-width="0.7"/>
<path d="M48.3,52.8 L50.2,54.7 L52.1,52.8" fill="none" stroke="#3c3c46" stroke-width="0.7"/>
<path d="M82.7,52.8 L84.6,54.7 L86.5,52.8" fill="none" stroke="#3c3c46" stroke-width="0.7"/>
<path d="M118.1,52.8 L120.0,54.7 L121.9,52.8" fill="none" stroke="#3c3c46" stroke-width="0.7"/>
<path d="M153.3,52.8 L155.2,54.7 L157.1,52.8" fill="none" stroke="#3c3c46" stroke-width="0.7"/>
<path d="M200.7,52.8 L202.6,54.7 L204.5,52.8" fill="none" stroke="#3c3c46" stroke-width="0.7"/>
<path d="M234.7,52.8 L236.6,54.7 L238.5,52.8" fill="none" stroke="#3c3c46" stroke-width="0.7"/>
<path d="M177.1,52.8 L179.0,54.7 L180.9,52.8" fill="none" stroke="#b8b8c4" stroke-width="0.7"/>
<path d="M164.8,51.6 L169,55.8 M169,51.6 L164.8,55.8" stroke="#8c8c98" stroke-width="0.7"/>
<path d="M190.4,51.4 L193.4,51.4 L194.4,52.4 L194.4,56.4 L190.4,56.4 Z" fill="#f4f4fc" stroke="#6878a8" stroke-width="0.5"/><path d="M191.2,53.4 L193.6,53.4 M191.2,54.8 L193.6,54.8" stroke="#3858c8" stroke-width="0.5"/>
</svg>
</div></body></html>
